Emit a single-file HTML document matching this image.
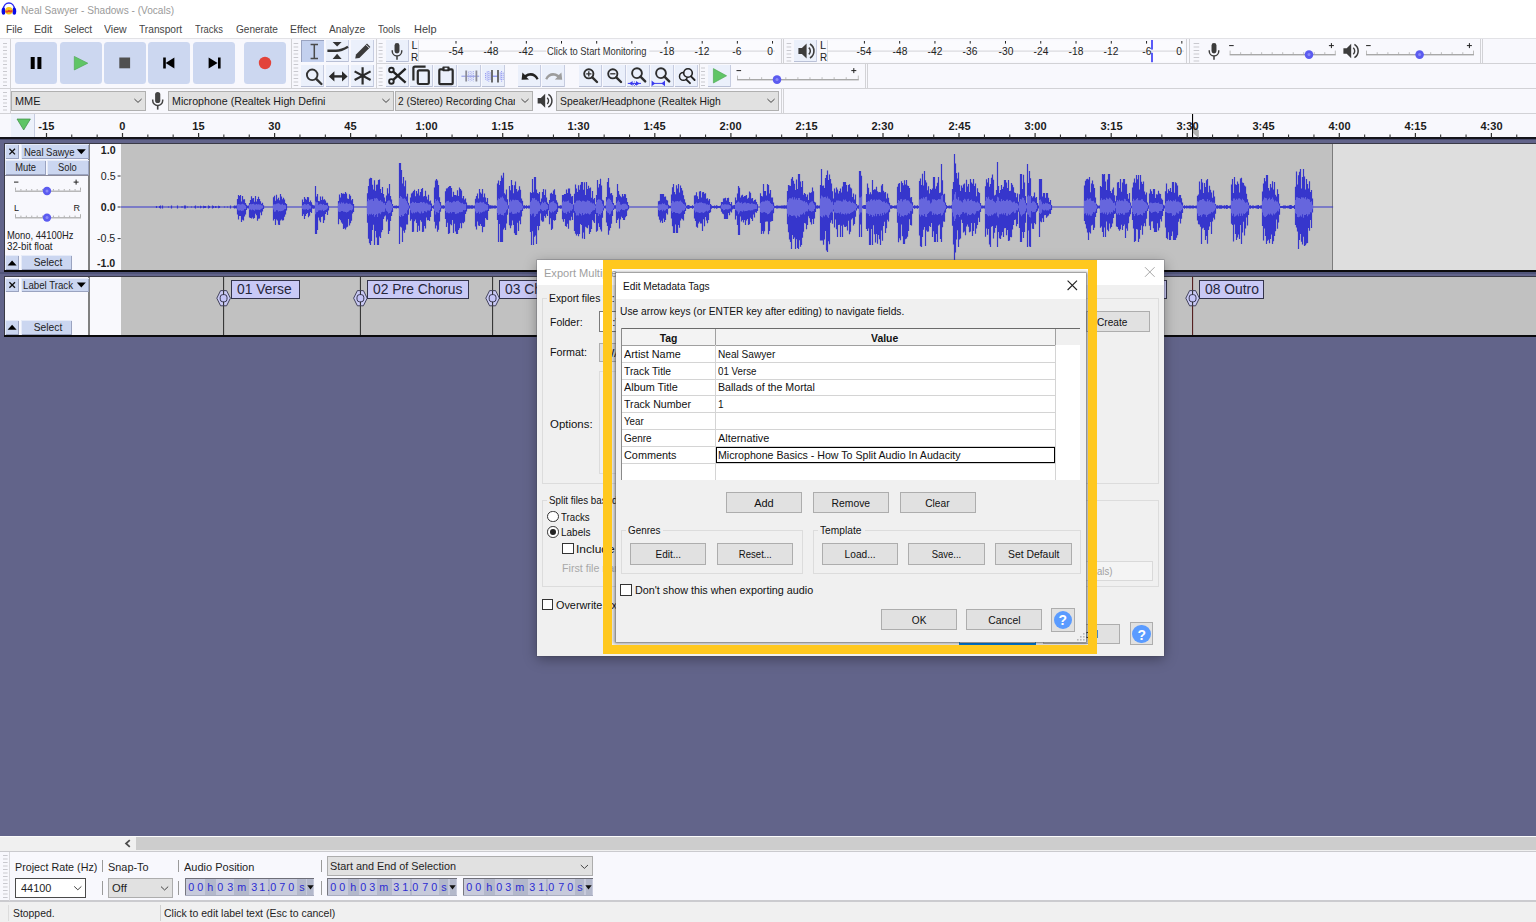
<!DOCTYPE html>
<html lang="en"><head><meta charset="utf-8"><title>Audacity - Edit Metadata Tags</title>
<style>
html,body{margin:0;padding:0;}
body{width:1536px;height:922px;overflow:hidden;background:#fff;position:relative;font-family:"Liberation Sans",sans-serif;}
.a{position:absolute;display:block;}
.t{white-space:nowrap;}
svg.a{overflow:hidden;}
</style></head><body>
<div class="a" style="left:0px;top:0px;width:1536px;height:38px;background:#ffffff;"></div>
<svg class="a" style="left:0px;top:0px;" width="20" height="20" viewBox="0 0 20 20">
<path d="M3.4 9.6 C3.4 0.8 14.4 0.8 14.4 9.6" fill="none" stroke="#2a2af0" stroke-width="1.5"/>
<ellipse cx="3.5" cy="11.2" rx="1.9" ry="3.6" fill="#0a0ae6"/>
<ellipse cx="14.3" cy="11.2" rx="1.9" ry="3.6" fill="#0a0ae6"/>
<ellipse cx="8.9" cy="10.8" rx="3.7" ry="3.8" fill="#f8c616"/>
<path d="M5.3 10.4 L7.4 10.8 L8.6 9.8 L10.4 10.6 L12.5 10 L12.5 12 L10.4 12.6 L8.6 12 L7.2 12.8 L5.3 12.2 Z" fill="#e8412c"/>
</svg>
<div class="a t" style="left:20.60px;top:2.30px;font-size:11.4px;line-height:16px;color:#9a9a9a;transform:scaleX(0.8860);transform-origin:0 50%;">Neal Sawyer - Shadows - (Vocals)</div>
<div class="a t" style="left:6.20px;top:21.00px;font-size:11.4px;line-height:16px;color:#444;transform:scaleX(0.9037);transform-origin:0 50%;">File</div>
<div class="a t" style="left:34.40px;top:21.00px;font-size:11.4px;line-height:16px;color:#444;transform:scaleX(0.9265);transform-origin:0 50%;">Edit</div>
<div class="a t" style="left:64.20px;top:21.00px;font-size:11.4px;line-height:16px;color:#444;transform:scaleX(0.8900);transform-origin:0 50%;">Select</div>
<div class="a t" style="left:104.40px;top:21.00px;font-size:11.4px;line-height:16px;color:#444;transform:scaleX(0.9227);transform-origin:0 50%;">View</div>
<div class="a t" style="left:139.40px;top:21.00px;font-size:11.4px;line-height:16px;color:#444;transform:scaleX(0.8937);transform-origin:0 50%;">Transport</div>
<div class="a t" style="left:195.20px;top:21.00px;font-size:11.4px;line-height:16px;color:#444;transform:scaleX(0.8246);transform-origin:0 50%;">Tracks</div>
<div class="a t" style="left:235.60px;top:21.00px;font-size:11.4px;line-height:16px;color:#444;transform:scaleX(0.8836);transform-origin:0 50%;">Generate</div>
<div class="a t" style="left:290.00px;top:21.00px;font-size:11.4px;line-height:16px;color:#444;transform:scaleX(0.9127);transform-origin:0 50%;">Effect</div>
<div class="a t" style="left:329.00px;top:21.00px;font-size:11.4px;line-height:16px;color:#444;transform:scaleX(0.8926);transform-origin:0 50%;">Analyze</div>
<div class="a t" style="left:378.40px;top:21.00px;font-size:11.4px;line-height:16px;color:#444;transform:scaleX(0.8394);transform-origin:0 50%;">Tools</div>
<div class="a t" style="left:413.80px;top:21.00px;font-size:11.4px;line-height:16px;color:#444;transform:scaleX(0.9639);transform-origin:0 50%;">Help</div>
<div class="a" style="left:0px;top:37.5px;width:1536px;height:76px;background:#f8f8fd;"></div>
<div class="a" style="left:0px;top:37.5px;width:1536px;height:1px;background:#e2e2e6;"></div>
<div class="a" style="left:0px;top:63px;width:1536px;height:1px;background:#d2d2d6;"></div>
<div class="a" style="left:0px;top:87.6px;width:1536px;height:1px;background:#d2d2d6;"></div>
<div class="a" style="left:0px;top:112.6px;width:1536px;height:1px;background:#d2d2d6;"></div>
<div class="a" style="left:0px;top:38.5px;width:376px;height:49px;background:#f8f8fd;"></div>
<div class="a" style="left:291px;top:38.5px;width:1px;height:49px;background:#d2d2d6;"></div>
<div class="a" style="left:15px;top:42px;width:42px;height:42px;background:#ccd7f0;border-radius:3.5px;"></div>
<div class="a" style="left:59.5px;top:42px;width:42px;height:42px;background:#ccd7f0;border-radius:3.5px;"></div>
<div class="a" style="left:104px;top:42px;width:42px;height:42px;background:#ccd7f0;border-radius:3.5px;"></div>
<div class="a" style="left:148px;top:42px;width:42px;height:42px;background:#ccd7f0;border-radius:3.5px;"></div>
<div class="a" style="left:192.5px;top:42px;width:42px;height:42px;background:#ccd7f0;border-radius:3.5px;"></div>
<div class="a" style="left:244px;top:42px;width:42px;height:42px;background:#ccd7f0;border-radius:3.5px;"></div>
<div class="a" style="left:301px;top:39.6px;width:23.4px;height:22.6px;background:#c3d0ee;"></div>
<div class="a" style="left:301px;top:39.6px;width:23.4px;height:1px;background:#9aa3c0;"></div>
<div class="a" style="left:301px;top:39.6px;width:1px;height:22.6px;background:#9aa3c0;"></div>
<div class="a" style="left:326px;top:39.8px;width:23.2px;height:22.2px;background:#ebf0fb;"></div>
<div class="a" style="left:326px;top:61px;width:23.2px;height:1px;background:#b9c0d6;"></div>
<div class="a" style="left:348.2px;top:39.8px;width:1px;height:22.2px;background:#c6cce0;"></div>
<div class="a" style="left:351px;top:39.8px;width:23.2px;height:22.2px;background:#ebf0fb;"></div>
<div class="a" style="left:351px;top:61px;width:23.2px;height:1px;background:#b9c0d6;"></div>
<div class="a" style="left:373.2px;top:39.8px;width:1px;height:22.2px;background:#c6cce0;"></div>
<div class="a" style="left:301px;top:64.6px;width:23.2px;height:22.2px;background:#ebf0fb;"></div>
<div class="a" style="left:301px;top:85.8px;width:23.2px;height:1px;background:#b9c0d6;"></div>
<div class="a" style="left:323.2px;top:64.6px;width:1px;height:22.2px;background:#c6cce0;"></div>
<div class="a" style="left:326px;top:64.6px;width:23.2px;height:22.2px;background:#ebf0fb;"></div>
<div class="a" style="left:326px;top:85.8px;width:23.2px;height:1px;background:#b9c0d6;"></div>
<div class="a" style="left:348.2px;top:64.6px;width:1px;height:22.2px;background:#c6cce0;"></div>
<div class="a" style="left:351px;top:64.6px;width:23.2px;height:22.2px;background:#ebf0fb;"></div>
<div class="a" style="left:351px;top:85.8px;width:23.2px;height:1px;background:#b9c0d6;"></div>
<div class="a" style="left:373.2px;top:64.6px;width:1px;height:22.2px;background:#c6cce0;"></div>
<div class="a" style="left:385.6px;top:39.8px;width:23.2px;height:22.2px;background:#ebf0fb;"></div>
<div class="a" style="left:385.6px;top:61px;width:23.2px;height:1px;background:#b9c0d6;"></div>
<div class="a" style="left:407.8px;top:39.8px;width:1px;height:22.2px;background:#c6cce0;"></div>
<div class="a" style="left:385.6px;top:64.6px;width:23.2px;height:22.2px;background:#ebf0fb;"></div>
<div class="a" style="left:385.6px;top:85.8px;width:23.2px;height:1px;background:#b9c0d6;"></div>
<div class="a" style="left:407.8px;top:64.6px;width:1px;height:22.2px;background:#c6cce0;"></div>
<div class="a" style="left:409.6px;top:64.6px;width:23.2px;height:22.2px;background:#ebf0fb;"></div>
<div class="a" style="left:409.6px;top:85.8px;width:23.2px;height:1px;background:#b9c0d6;"></div>
<div class="a" style="left:431.8px;top:64.6px;width:1px;height:22.2px;background:#c6cce0;"></div>
<div class="a" style="left:433.6px;top:64.6px;width:23.2px;height:22.2px;background:#ebf0fb;"></div>
<div class="a" style="left:433.6px;top:85.8px;width:23.2px;height:1px;background:#b9c0d6;"></div>
<div class="a" style="left:455.8px;top:64.6px;width:1px;height:22.2px;background:#c6cce0;"></div>
<div class="a" style="left:457.6px;top:64.6px;width:23.2px;height:22.2px;background:#ebf0fb;"></div>
<div class="a" style="left:457.6px;top:85.8px;width:23.2px;height:1px;background:#b9c0d6;"></div>
<div class="a" style="left:479.8px;top:64.6px;width:1px;height:22.2px;background:#c6cce0;"></div>
<div class="a" style="left:481.6px;top:64.6px;width:23.2px;height:22.2px;background:#ebf0fb;"></div>
<div class="a" style="left:481.6px;top:85.8px;width:23.2px;height:1px;background:#b9c0d6;"></div>
<div class="a" style="left:503.8px;top:64.6px;width:1px;height:22.2px;background:#c6cce0;"></div>
<div class="a" style="left:517.8px;top:64.6px;width:23.2px;height:22.2px;background:#ebf0fb;"></div>
<div class="a" style="left:517.8px;top:85.8px;width:23.2px;height:1px;background:#b9c0d6;"></div>
<div class="a" style="left:540px;top:64.6px;width:1px;height:22.2px;background:#c6cce0;"></div>
<div class="a" style="left:541.8px;top:64.6px;width:23.2px;height:22.2px;background:#ebf0fb;"></div>
<div class="a" style="left:541.8px;top:85.8px;width:23.2px;height:1px;background:#b9c0d6;"></div>
<div class="a" style="left:564px;top:64.6px;width:1px;height:22.2px;background:#c6cce0;"></div>
<div class="a" style="left:578.6px;top:64.6px;width:23.2px;height:22.2px;background:#ebf0fb;"></div>
<div class="a" style="left:578.6px;top:85.8px;width:23.2px;height:1px;background:#b9c0d6;"></div>
<div class="a" style="left:600.8px;top:64.6px;width:1px;height:22.2px;background:#c6cce0;"></div>
<div class="a" style="left:602.6px;top:64.6px;width:23.2px;height:22.2px;background:#ebf0fb;"></div>
<div class="a" style="left:602.6px;top:85.8px;width:23.2px;height:1px;background:#b9c0d6;"></div>
<div class="a" style="left:624.8px;top:64.6px;width:1px;height:22.2px;background:#c6cce0;"></div>
<div class="a" style="left:626.6px;top:64.6px;width:23.2px;height:22.2px;background:#ebf0fb;"></div>
<div class="a" style="left:626.6px;top:85.8px;width:23.2px;height:1px;background:#b9c0d6;"></div>
<div class="a" style="left:648.8px;top:64.6px;width:1px;height:22.2px;background:#c6cce0;"></div>
<div class="a" style="left:650.6px;top:64.6px;width:23.2px;height:22.2px;background:#ebf0fb;"></div>
<div class="a" style="left:650.6px;top:85.8px;width:23.2px;height:1px;background:#b9c0d6;"></div>
<div class="a" style="left:672.8px;top:64.6px;width:1px;height:22.2px;background:#c6cce0;"></div>
<div class="a" style="left:674.6px;top:64.6px;width:23.2px;height:22.2px;background:#ebf0fb;"></div>
<div class="a" style="left:674.6px;top:85.8px;width:23.2px;height:1px;background:#b9c0d6;"></div>
<div class="a" style="left:696.8px;top:64.6px;width:1px;height:22.2px;background:#c6cce0;"></div>
<div class="a" style="left:708px;top:64.6px;width:23.2px;height:22.2px;background:#ebf0fb;"></div>
<div class="a" style="left:708px;top:85.8px;width:23.2px;height:1px;background:#b9c0d6;"></div>
<div class="a" style="left:730.2px;top:64.6px;width:1px;height:22.2px;background:#c6cce0;"></div>
<div class="a" style="left:793.8px;top:39.8px;width:23.2px;height:22.2px;background:#ebf0fb;"></div>
<div class="a" style="left:793.8px;top:61px;width:23.2px;height:1px;background:#b9c0d6;"></div>
<div class="a" style="left:816px;top:39.8px;width:1px;height:22.2px;background:#c6cce0;"></div>
<div class="a" style="left:376px;top:38.5px;width:1px;height:49px;background:#d2d2d6;"></div>
<div class="a" style="left:780.5px;top:38.5px;width:1px;height:25px;background:#d2d2d6;"></div>
<div class="a" style="left:783px;top:38.5px;width:1px;height:25px;background:#d2d2d6;"></div>
<div class="a" style="left:1186px;top:38.5px;width:1px;height:25px;background:#d2d2d6;"></div>
<div class="a" style="left:1188.6px;top:38.5px;width:1px;height:25px;background:#d2d2d6;"></div>
<div class="a" style="left:1479.6px;top:38.5px;width:1px;height:25px;background:#d2d2d6;"></div>
<div class="a" style="left:1482px;top:38.5px;width:1px;height:25px;background:#d2d2d6;"></div>
<div class="a" style="left:699px;top:64px;width:1px;height:24px;background:#d2d2d6;"></div>
<div class="a" style="left:865px;top:64px;width:1px;height:24px;background:#d2d2d6;"></div>
<div class="a" style="left:867.4px;top:64px;width:1px;height:24px;background:#d2d2d6;"></div>
<div class="a" style="left:780.5px;top:88.6px;width:1px;height:24px;background:#d2d2d6;"></div>
<div class="a" style="left:783px;top:88.6px;width:1px;height:24px;background:#d2d2d6;"></div>
<div class="a" style="left:9.5px;top:38.5px;width:1px;height:75px;background:#d2d2d6;"></div>
<svg class="a" style="left:0px;top:38px;" width="1536" height="76" viewBox="0 38 1536 76"><rect x="3" y="43" width="4" height="1" fill="#c9c9cf"/><rect x="3" y="46.5" width="4" height="1" fill="#c9c9cf"/><rect x="3" y="50" width="4" height="1" fill="#c9c9cf"/><rect x="3" y="53.5" width="4" height="1" fill="#c9c9cf"/><rect x="3" y="57" width="4" height="1" fill="#c9c9cf"/><rect x="3" y="60.5" width="4" height="1" fill="#c9c9cf"/><rect x="3" y="64" width="4" height="1" fill="#c9c9cf"/><rect x="3" y="67.5" width="4" height="1" fill="#c9c9cf"/><rect x="3" y="71" width="4" height="1" fill="#c9c9cf"/><rect x="3" y="74.5" width="4" height="1" fill="#c9c9cf"/><rect x="3" y="78" width="4" height="1" fill="#c9c9cf"/><rect x="3" y="81.5" width="4" height="1" fill="#c9c9cf"/><rect x="3" y="85" width="4" height="1" fill="#c9c9cf"/><rect x="293.6" y="43" width="4.6" height="1" fill="#c9c9cf"/><rect x="293.6" y="46.5" width="4.6" height="1" fill="#c9c9cf"/><rect x="293.6" y="50" width="4.6" height="1" fill="#c9c9cf"/><rect x="293.6" y="53.5" width="4.6" height="1" fill="#c9c9cf"/><rect x="293.6" y="57" width="4.6" height="1" fill="#c9c9cf"/><rect x="293.6" y="60.5" width="4.6" height="1" fill="#c9c9cf"/><rect x="293.6" y="64" width="4.6" height="1" fill="#c9c9cf"/><rect x="293.6" y="67.5" width="4.6" height="1" fill="#c9c9cf"/><rect x="293.6" y="71" width="4.6" height="1" fill="#c9c9cf"/><rect x="293.6" y="74.5" width="4.6" height="1" fill="#c9c9cf"/><rect x="293.6" y="78" width="4.6" height="1" fill="#c9c9cf"/><rect x="293.6" y="81.5" width="4.6" height="1" fill="#c9c9cf"/><rect x="293.6" y="85" width="4.6" height="1" fill="#c9c9cf"/><rect x="378.6" y="43" width="4" height="1" fill="#c9c9cf"/><rect x="378.6" y="46.5" width="4" height="1" fill="#c9c9cf"/><rect x="378.6" y="50" width="4" height="1" fill="#c9c9cf"/><rect x="378.6" y="53.5" width="4" height="1" fill="#c9c9cf"/><rect x="378.6" y="57" width="4" height="1" fill="#c9c9cf"/><rect x="378.6" y="60.5" width="4" height="1" fill="#c9c9cf"/><rect x="378.6" y="67.5" width="4" height="1" fill="#c9c9cf"/><rect x="378.6" y="71" width="4" height="1" fill="#c9c9cf"/><rect x="378.6" y="74.5" width="4" height="1" fill="#c9c9cf"/><rect x="378.6" y="78" width="4" height="1" fill="#c9c9cf"/><rect x="378.6" y="81.5" width="4" height="1" fill="#c9c9cf"/><rect x="378.6" y="85" width="4" height="1" fill="#c9c9cf"/><rect x="701" y="67.5" width="4" height="1" fill="#c9c9cf"/><rect x="701" y="71" width="4" height="1" fill="#c9c9cf"/><rect x="701" y="74.5" width="4" height="1" fill="#c9c9cf"/><rect x="701" y="78" width="4" height="1" fill="#c9c9cf"/><rect x="701" y="81.5" width="4" height="1" fill="#c9c9cf"/><rect x="701" y="85" width="4" height="1" fill="#c9c9cf"/><rect x="786.6" y="43" width="4.6" height="1" fill="#c9c9cf"/><rect x="786.6" y="46.5" width="4.6" height="1" fill="#c9c9cf"/><rect x="786.6" y="50" width="4.6" height="1" fill="#c9c9cf"/><rect x="786.6" y="53.5" width="4.6" height="1" fill="#c9c9cf"/><rect x="786.6" y="57" width="4.6" height="1" fill="#c9c9cf"/><rect x="786.6" y="60.5" width="4.6" height="1" fill="#c9c9cf"/><rect x="1193.6" y="43" width="5.6" height="1" fill="#c9c9cf"/><rect x="1193.6" y="46.5" width="5.6" height="1" fill="#c9c9cf"/><rect x="1193.6" y="50" width="5.6" height="1" fill="#c9c9cf"/><rect x="1193.6" y="53.5" width="5.6" height="1" fill="#c9c9cf"/><rect x="1193.6" y="57" width="5.6" height="1" fill="#c9c9cf"/><rect x="1193.6" y="60.5" width="5.6" height="1" fill="#c9c9cf"/><rect x="3" y="92" width="4" height="1" fill="#c9c9cf"/><rect x="3" y="95.5" width="4" height="1" fill="#c9c9cf"/><rect x="3" y="99" width="4" height="1" fill="#c9c9cf"/><rect x="3" y="102.5" width="4" height="1" fill="#c9c9cf"/><rect x="3" y="106" width="4" height="1" fill="#c9c9cf"/><rect x="3" y="109.5" width="4" height="1" fill="#c9c9cf"/><rect x="30.7" y="57" width="4" height="12" fill="#000"/><rect x="37.4" y="57" width="4" height="12" fill="#000"/><path d="M74.3 56.4 L87.8 63.2 L74.3 70 Z" fill="#5fc566" stroke="#48a24e" stroke-width="0.6"/><rect x="119.3" y="57.5" width="10.8" height="10.8" fill="#505050"/><rect x="163.2" y="57.5" width="2.6" height="11" fill="#000"/><path d="M174.4 57.5 V68.5 L165.6 63 Z" fill="#000"/><rect x="218" y="57.5" width="2.6" height="11" fill="#000"/><path d="M208.6 57.5 V68.5 L217.6 63 Z" fill="#000"/><circle cx="265" cy="63" r="6.2" fill="#e2433a"/><path d="M310.6 44.4 H318 M314.3 44.4 V58.4 M310.6 58.4 H318" stroke="#4a4a4a" stroke-width="1.5" fill="none"/><path d="M332.6 42 H341.6 L337.1 46.6 Z" fill="#333"/><path d="M332.6 59 H341.6 L337.1 53.8 Z" fill="#333"/><path d="M327.4 50.8 H336 C340 50.8 343.4 49.6 348 46.8" stroke="#333" stroke-width="2.4" fill="none"/><path d="M355.2 58.6 L356 54.6 L367 43.6 L370.4 47 L359.4 58 Z" fill="#3a3a3a"/><path d="M366 44.8 L369.4 48.2" stroke="#ebf0fb" stroke-width="0.9"/><g transform="translate(313.8 76.6)"><circle cx="-1.6" cy="-1.8" r="5.3" fill="none" stroke="#333" stroke-width="1.9"/><path d="M2.4 2.2 L7.6 7.4" stroke="#333" stroke-width="2.4" stroke-linecap="round"/></g><path d="M332 76.4 H345" stroke="#2a2a2a" stroke-width="2.4"/><path d="M328.8 76.4 L334.4 71.3 V81.5 Z M347.6 76.4 L342 71.3 V81.5 Z" fill="#2a2a2a"/><path d="M362.6 67.2 V84.4 M354.6 71.4 L370.6 80 M354.6 80 L370.6 71.4" stroke="#2a2a2a" stroke-width="2.2" fill="none"/><g transform="translate(397 51.6) scale(0.95)" fill="none" stroke="#3c3c3c"><rect x="-2.6" y="-9" width="5.2" height="11" rx="2.6" fill="#3c3c3c" stroke="none"/><path d="M-5 -1.5 V-0.5 A5 5 0 0 0 5 -0.5 V-1.5" stroke-width="1.5"/><path d="M0 4.6 V8.6" stroke-width="1.6"/></g><g stroke="#222" fill="none"><circle cx="391.4" cy="70" r="2.3" stroke-width="1.9"/><circle cx="391.4" cy="81.4" r="2.3" stroke-width="1.9"/><path d="M393.2 71.6 L405.6 82.6 M393.2 79.8 L405.6 68.6" stroke-width="2.4"/></g><g stroke="#2a2a2a" fill="none" stroke-width="2.2"><rect x="417.8" y="70.4" width="11" height="13.6" rx="1.4"/><path d="M413.4 80.4 V68 Q413.4 66.6 415 66.6 H425.6"/></g><rect x="439.3" y="69.4" width="13.4" height="14.8" rx="1" stroke="#2a2a2a" fill="none" stroke-width="2.2"/><rect x="442.4" y="66.6" width="7.2" height="4.6" rx="0.8" fill="#2a2a2a"/><rect x="444.6" y="67.8" width="2.8" height="1.6" fill="#ebf0fb"/><path d="M461.4 76.2 H479.2" stroke="#8088e0" stroke-width="0.9" fill="none"/><path d="M468.6 71.6 V80.8 M470.2 71 V81.4 M471.8 71.6 V80.8 M473.4 71 V81.4" stroke="#9aa0e8" stroke-width="0.8" stroke-dasharray="1.2 0.8" fill="none"/><path d="M466.2 70.6 V81.4 M476.4 70.6 V81.4" stroke="#8c8c98" stroke-width="1.8"/><g stroke="#8a90f0" stroke-width="0.9" fill="none" stroke-dasharray="1.3 0.7"><path d="M485.6 73 V79.6 M487.2 71.4 V81.4 M488.8 71 V81.6 M490.2 72.4 V80.2 M500.2 72.4 V80.2 M501.6 71 V81.6 M503.2 72.6 V80"/></g><path d="M492.6 76.2 H497.6" stroke="#6a74ee" stroke-width="1"/><path d="M492 70 V82.4 M498 70 V82.4" stroke="#555" stroke-width="1.7"/><path d="M522.4 72.4 L521.6 79.8 L529 79.4 L526.6 77.2 C530 74.6 534.6 75.4 536.6 79.8 L538.6 78.8 C536 72.4 529.6 71.4 525 75 Z" fill="#222"/><path d="M561.4 72.4 L562.2 79.8 L554.8 79.4 L557.2 77.2 C553.8 74.6 549.2 75.4 547.2 79.8 L545.2 78.8 C547.8 72.4 554.2 71.4 558.8 75 Z" fill="#9c9c9c"/><g transform="translate(590.4 75.6)"><circle cx="-1.6" cy="-1.8" r="4.6" fill="none" stroke="#2e2e2e" stroke-width="1.9"/><path d="M1.9 1.7 L6.6 6.4" stroke="#2e2e2e" stroke-width="2.4" stroke-linecap="round"/><path d="M-4.2 -1.8 H1 M-1.6 -4.4 V0.8" stroke="#2e2e2e" stroke-width="1.3"/></g><g transform="translate(614.4 75.6)"><circle cx="-1.6" cy="-1.8" r="4.6" fill="none" stroke="#2e2e2e" stroke-width="1.9"/><path d="M1.9 1.7 L6.6 6.4" stroke="#2e2e2e" stroke-width="2.4" stroke-linecap="round"/><path d="M-4.2 -1.8 H1" stroke="#2e2e2e" stroke-width="1.3"/></g><g transform="translate(638.6 75)"><circle cx="-1.6" cy="-1.8" r="4.9" fill="none" stroke="#2e2e2e" stroke-width="1.9"/><path d="M1.9 1.7 L6.6 6.4" stroke="#2e2e2e" stroke-width="2.4" stroke-linecap="round"/></g><path d="M627.8 83.4 H641" stroke="#3a3aee" stroke-width="1"/><path d="M629 83.4 L632.6 81 V85.8 Z M639.6 83.4 L636 81 V85.8 Z M632 83.4 L635 81.4 V85.4Z M637 83.4 L634 81.4 V85.4Z" fill="#3a3aee"/><g transform="translate(662.6 75)"><circle cx="-1.6" cy="-1.8" r="4.9" fill="none" stroke="#2e2e2e" stroke-width="1.9"/><path d="M1.9 1.7 L6.6 6.4" stroke="#2e2e2e" stroke-width="2.4" stroke-linecap="round"/></g><path d="M652 83.4 H664" stroke="#3a3aee" stroke-width="1"/><path d="M651.6 80.6 V86.2 L655.2 83.4 Z M665 80.6 V86.2 L661.4 83.4 Z" fill="#3a3aee"/><g fill="none" stroke="#222"><circle cx="683.4" cy="76.4" r="3.9" stroke-width="1.5"/><circle cx="688" cy="73" r="4.3" stroke-width="1.6" fill="#ebf0fb"/><path d="M686.4 79.6 L690 83.2 M691 76.4 L694.6 80" stroke-width="1.9" stroke-linecap="round"/></g><path d="M713.4 68.6 L726.6 75.8 L713.4 83 Z" fill="#5fc566" stroke="#48a24e" stroke-width="0.6"/><rect x="736.5" y="70.1" width="4.6" height="1" fill="#222"/><rect x="851.3" y="70.1" width="5" height="1" fill="#222"/><rect x="853.3" y="68.1" width="1" height="5" fill="#222"/><rect x="737" y="79" width="121.8" height="1.4" fill="#a8a8a8"/><rect x="737" y="75.6" width="1" height="3.4" fill="#bdbdbd"/><rect x="749.08" y="77.2" width="1" height="1.8" fill="#bdbdbd"/><rect x="761.16" y="77.2" width="1" height="1.8" fill="#bdbdbd"/><rect x="773.24" y="77.2" width="1" height="1.8" fill="#bdbdbd"/><rect x="785.32" y="77.2" width="1" height="1.8" fill="#bdbdbd"/><rect x="797.4" y="77.2" width="1" height="1.8" fill="#bdbdbd"/><rect x="809.48" y="77.2" width="1" height="1.8" fill="#bdbdbd"/><rect x="821.56" y="77.2" width="1" height="1.8" fill="#bdbdbd"/><rect x="833.64" y="77.2" width="1" height="1.8" fill="#bdbdbd"/><rect x="845.72" y="77.2" width="1" height="1.8" fill="#bdbdbd"/><rect x="857.8" y="75.6" width="1" height="3.4" fill="#bdbdbd"/><circle cx="777" cy="79.6" r="4.3" fill="#5b5bf0"/><circle cx="777" cy="79.6" r="1.5" fill="#8b8bf6"/><g transform="translate(806.4 51) scale(1)" fill="none" stroke="#3c3c3c"><path d="M-8 -3 H-4.5 L0.2 -7.6 V7.6 L-4.5 3 H-8Z" fill="#3c3c3c" stroke="none"/><path d="M2.4 -3.4 A4.6 4.6 0 0 1 2.4 3.4" stroke-width="1.5"/><path d="M3.6 -7 A8.2 8.2 0 0 1 3.6 7" stroke-width="1.6"/></g><g transform="translate(1214 51.6) scale(0.95)" fill="none" stroke="#3c3c3c"><rect x="-2.6" y="-9" width="5.2" height="11" rx="2.6" fill="#3c3c3c" stroke="none"/><path d="M-5 -1.5 V-0.5 A5 5 0 0 0 5 -0.5 V-1.5" stroke-width="1.5"/><path d="M0 4.6 V8.6" stroke-width="1.6"/></g><rect x="1229.1" y="45.1" width="4.6" height="1" fill="#222"/><rect x="1328.9" y="45.1" width="5" height="1" fill="#222"/><rect x="1330.9" y="43.1" width="1" height="5" fill="#222"/><rect x="1229.6" y="54" width="106.2" height="1.4" fill="#a8a8a8"/><rect x="1229.6" y="50.6" width="1" height="3.4" fill="#bdbdbd"/><rect x="1240.12" y="52.2" width="1" height="1.8" fill="#bdbdbd"/><rect x="1250.64" y="52.2" width="1" height="1.8" fill="#bdbdbd"/><rect x="1261.16" y="52.2" width="1" height="1.8" fill="#bdbdbd"/><rect x="1271.68" y="52.2" width="1" height="1.8" fill="#bdbdbd"/><rect x="1282.2" y="52.2" width="1" height="1.8" fill="#bdbdbd"/><rect x="1292.72" y="52.2" width="1" height="1.8" fill="#bdbdbd"/><rect x="1303.24" y="52.2" width="1" height="1.8" fill="#bdbdbd"/><rect x="1313.76" y="52.2" width="1" height="1.8" fill="#bdbdbd"/><rect x="1324.28" y="52.2" width="1" height="1.8" fill="#bdbdbd"/><rect x="1334.8" y="50.6" width="1" height="3.4" fill="#bdbdbd"/><circle cx="1309" cy="54.6" r="4.3" fill="#5b5bf0"/><circle cx="1309" cy="54.6" r="1.5" fill="#8b8bf6"/><g transform="translate(1351 51) scale(0.95)" fill="none" stroke="#3c3c3c"><path d="M-8 -3 H-4.5 L0.2 -7.6 V7.6 L-4.5 3 H-8Z" fill="#3c3c3c" stroke="none"/><path d="M2.4 -3.4 A4.6 4.6 0 0 1 2.4 3.4" stroke-width="1.5"/><path d="M3.6 -7 A8.2 8.2 0 0 1 3.6 7" stroke-width="1.6"/></g><rect x="1366.1" y="45.1" width="4.6" height="1" fill="#222"/><rect x="1466.9" y="45.1" width="5" height="1" fill="#222"/><rect x="1468.9" y="43.1" width="1" height="5" fill="#222"/><rect x="1366" y="54" width="108" height="1.4" fill="#a8a8a8"/><rect x="1366" y="50.6" width="1" height="3.4" fill="#bdbdbd"/><rect x="1376.7" y="52.2" width="1" height="1.8" fill="#bdbdbd"/><rect x="1387.4" y="52.2" width="1" height="1.8" fill="#bdbdbd"/><rect x="1398.1" y="52.2" width="1" height="1.8" fill="#bdbdbd"/><rect x="1408.8" y="52.2" width="1" height="1.8" fill="#bdbdbd"/><rect x="1419.5" y="52.2" width="1" height="1.8" fill="#bdbdbd"/><rect x="1430.2" y="52.2" width="1" height="1.8" fill="#bdbdbd"/><rect x="1440.9" y="52.2" width="1" height="1.8" fill="#bdbdbd"/><rect x="1451.6" y="52.2" width="1" height="1.8" fill="#bdbdbd"/><rect x="1462.3" y="52.2" width="1" height="1.8" fill="#bdbdbd"/><rect x="1473" y="50.6" width="1" height="3.4" fill="#bdbdbd"/><circle cx="1419.6" cy="54.6" r="4.3" fill="#5b5bf0"/><circle cx="1419.6" cy="54.6" r="1.5" fill="#8b8bf6"/><g transform="translate(157.7 101) scale(1)" fill="none" stroke="#444"><rect x="-2.6" y="-9" width="5.2" height="11" rx="2.6" fill="#444" stroke="none"/><path d="M-5 -1.5 V-0.5 A5 5 0 0 0 5 -0.5 V-1.5" stroke-width="1.5"/><path d="M0 4.6 V8.6" stroke-width="1.6"/></g><g transform="translate(545 100.8) scale(0.92)" fill="none" stroke="#3c3c3c"><path d="M-8 -3 H-4.5 L0.2 -7.6 V7.6 L-4.5 3 H-8Z" fill="#3c3c3c" stroke="none"/><path d="M2.4 -3.4 A4.6 4.6 0 0 1 2.4 3.4" stroke-width="1.5"/><path d="M3.6 -7 A8.2 8.2 0 0 1 3.6 7" stroke-width="1.6"/></g><rect x="419" y="40.2" width="356" height="21.6" fill="#fbfbfe"/><rect x="419" y="50.6" width="356" height="1" fill="#d3d3d8"/><rect x="418" y="40.2" width="1" height="21.6" fill="#dcdce0"/><rect x="455.5" y="41" width="1" height="2.6" fill="#222"/><rect x="490.67" y="41" width="1" height="2.6" fill="#222"/><rect x="525.84" y="41" width="1" height="2.6" fill="#222"/><rect x="561.01" y="41" width="1" height="2.6" fill="#222"/><rect x="596.18" y="41" width="1" height="2.6" fill="#222"/><rect x="631.35" y="41" width="1" height="2.6" fill="#222"/><rect x="666.52" y="41" width="1" height="2.6" fill="#222"/><rect x="701.69" y="41" width="1" height="2.6" fill="#222"/><rect x="736.86" y="41" width="1" height="2.6" fill="#222"/><rect x="772.03" y="41" width="1" height="2.6" fill="#222"/><rect x="546.4" y="45.6" width="103" height="12.6" fill="#fcfcff"/><rect x="828" y="40.2" width="356" height="21.6" fill="#fbfbfe"/><rect x="828" y="50.6" width="356" height="1" fill="#d3d3d8"/><rect x="827" y="40.2" width="1" height="21.6" fill="#dcdce0"/><rect x="863.9" y="41" width="1" height="2.6" fill="#222"/><rect x="899.17" y="41" width="1" height="2.6" fill="#222"/><rect x="934.44" y="41" width="1" height="2.6" fill="#222"/><rect x="969.71" y="41" width="1" height="2.6" fill="#222"/><rect x="1004.98" y="41" width="1" height="2.6" fill="#222"/><rect x="1040.25" y="41" width="1" height="2.6" fill="#222"/><rect x="1075.52" y="41" width="1" height="2.6" fill="#222"/><rect x="1110.79" y="41" width="1" height="2.6" fill="#222"/><rect x="1146.06" y="41" width="1" height="2.6" fill="#222"/><rect x="1181.33" y="41" width="1" height="2.6" fill="#222"/><rect x="1151" y="40" width="2" height="9.6" fill="#5a5af8"/><rect x="1151" y="52.8" width="2" height="9.4" fill="#5a5af8"/></svg>
<div class="a t" style="left:448.05px;top:43.70px;font-size:11px;line-height:15px;color:#222;transform:scaleX(0.9300);transform-origin:50% 50%;">-54</div>
<div class="a t" style="left:483.22px;top:43.70px;font-size:11px;line-height:15px;color:#222;transform:scaleX(0.9300);transform-origin:50% 50%;">-48</div>
<div class="a t" style="left:518.39px;top:43.70px;font-size:11px;line-height:15px;color:#222;transform:scaleX(0.9300);transform-origin:50% 50%;">-42</div>
<div class="a t" style="left:659.07px;top:43.70px;font-size:11px;line-height:15px;color:#222;transform:scaleX(0.9300);transform-origin:50% 50%;">-18</div>
<div class="a t" style="left:694.24px;top:43.70px;font-size:11px;line-height:15px;color:#222;transform:scaleX(0.9300);transform-origin:50% 50%;">-12</div>
<div class="a t" style="left:732.47px;top:43.70px;font-size:11px;line-height:15px;color:#222;transform:scaleX(0.9300);transform-origin:50% 50%;">-6</div>
<div class="a t" style="left:766.97px;top:43.70px;font-size:11px;line-height:15px;color:#222;transform:scaleX(0.9300);transform-origin:50% 50%;">0</div>
<div class="a t" style="left:546.80px;top:44.10px;font-size:11px;line-height:15px;color:#333;transform:scaleX(0.8513);transform-origin:0 50%;">Click to Start Monitoring</div>
<div class="a t" style="left:856.45px;top:43.70px;font-size:11px;line-height:15px;color:#222;transform:scaleX(0.9300);transform-origin:50% 50%;">-54</div>
<div class="a t" style="left:891.72px;top:43.70px;font-size:11px;line-height:15px;color:#222;transform:scaleX(0.9300);transform-origin:50% 50%;">-48</div>
<div class="a t" style="left:926.99px;top:43.70px;font-size:11px;line-height:15px;color:#222;transform:scaleX(0.9300);transform-origin:50% 50%;">-42</div>
<div class="a t" style="left:962.26px;top:43.70px;font-size:11px;line-height:15px;color:#222;transform:scaleX(0.9300);transform-origin:50% 50%;">-36</div>
<div class="a t" style="left:997.53px;top:43.70px;font-size:11px;line-height:15px;color:#222;transform:scaleX(0.9300);transform-origin:50% 50%;">-30</div>
<div class="a t" style="left:1032.80px;top:43.70px;font-size:11px;line-height:15px;color:#222;transform:scaleX(0.9300);transform-origin:50% 50%;">-24</div>
<div class="a t" style="left:1068.07px;top:43.70px;font-size:11px;line-height:15px;color:#222;transform:scaleX(0.9300);transform-origin:50% 50%;">-18</div>
<div class="a t" style="left:1103.34px;top:43.70px;font-size:11px;line-height:15px;color:#222;transform:scaleX(0.9300);transform-origin:50% 50%;">-12</div>
<div class="a t" style="left:1141.67px;top:43.70px;font-size:11px;line-height:15px;color:#222;transform:scaleX(0.9300);transform-origin:50% 50%;">-6</div>
<div class="a t" style="left:1175.77px;top:43.70px;font-size:11px;line-height:15px;color:#222;transform:scaleX(0.9300);transform-origin:50% 50%;">0</div>
<div class="a t" style="left:411.40px;top:37.50px;font-size:11px;line-height:15px;color:#222;">L</div>
<div class="a t" style="left:411.40px;top:49.90px;font-size:11px;line-height:15px;color:#222;transform:scaleX(0.9000);transform-origin:0 50%;">R</div>
<div class="a t" style="left:820.00px;top:37.50px;font-size:11px;line-height:15px;color:#222;">L</div>
<div class="a t" style="left:820.00px;top:49.90px;font-size:11px;line-height:15px;color:#222;transform:scaleX(0.9000);transform-origin:0 50%;">R</div>
<div class="a" style="left:11px;top:90.6px;width:134.8px;height:20px;background:#e1e1e1;border:1px solid #b0b0b0;box-sizing:border-box;"></div>
<div class="a t" style="left:14.60px;top:92.70px;font-size:11.4px;line-height:16px;color:#1a1a1a;transform:scaleX(0.9588);transform-origin:0 50%;">MME</div>
<svg class="a" style="left:131.8px;top:96px;" width="12" height="10" viewBox="131.8 96 12 10"><path d="M134.2 99 L137.8 102.4 L141.4 99" stroke="#444" stroke-width="1" fill="none"/></svg>
<div class="a" style="left:168.4px;top:90.6px;width:225.2px;height:20px;background:#e1e1e1;border:1px solid #b0b0b0;box-sizing:border-box;"></div>
<div class="a t" style="left:172.00px;top:92.70px;font-size:11.4px;line-height:16px;color:#1a1a1a;transform:scaleX(0.9360);transform-origin:0 50%;">Microphone (Realtek High Defini</div>
<svg class="a" style="left:379.6px;top:96px;" width="12" height="10" viewBox="379.6 96 12 10"><path d="M382 99 L385.6 102.4 L389.2 99" stroke="#444" stroke-width="1" fill="none"/></svg>
<div class="a" style="left:394.8px;top:90.6px;width:138.2px;height:20px;background:#e1e1e1;border:1px solid #b0b0b0;box-sizing:border-box;"></div>
<div class="a t" style="left:398.40px;top:92.70px;font-size:11.4px;line-height:16px;color:#1a1a1a;transform:scaleX(0.8867);transform-origin:0 50%;">2 (Stereo) Recording Chan</div>
<div class="a" style="left:515.1px;top:92px;width:16.9px;height:17px;background:#e1e1e1;"></div>
<svg class="a" style="left:519px;top:96px;" width="12" height="10" viewBox="519 96 12 10"><path d="M521.4 99 L525 102.4 L528.6 99" stroke="#444" stroke-width="1" fill="none"/></svg>
<div class="a" style="left:556px;top:90.6px;width:222.8px;height:20px;background:#e1e1e1;border:1px solid #b0b0b0;box-sizing:border-box;"></div>
<div class="a t" style="left:559.60px;top:92.70px;font-size:11.4px;line-height:16px;color:#1a1a1a;transform:scaleX(0.9106);transform-origin:0 50%;">Speaker/Headphone (Realtek High</div>
<svg class="a" style="left:764.8px;top:96px;" width="12" height="10" viewBox="764.8 96 12 10"><path d="M767.2 99 L770.8 102.4 L774.4 99" stroke="#444" stroke-width="1" fill="none"/></svg>
<div class="a" style="left:0px;top:113.6px;width:1536px;height:24.4px;background:#f8f8fd;"></div>
<div class="a" style="left:11px;top:114.4px;width:23.4px;height:22.6px;background:#edf1fb;"></div>
<div class="a" style="left:33.6px;top:114.4px;width:1px;height:23px;background:#c6cce0;"></div>
<div class="a" style="left:0px;top:137.4px;width:1536px;height:698.5px;background:#62648a;"></div>
<div class="a" style="left:0px;top:137.4px;width:1536px;height:1.6px;background:#15151c;"></div>
<div class="a" style="left:0px;top:139px;width:1536px;height:0.8px;background:#4a4c6e;"></div>
<div class="a" style="left:3.6px;top:142.5px;width:1532.4px;height:127.7px;background:#3a3a46;"></div>
<div class="a" style="left:3.6px;top:270px;width:1532.4px;height:1.8px;background:#0a0a0c;"></div>
<div class="a" style="left:0px;top:271.8px;width:1536px;height:2px;background:#50547a;"></div>
<div class="a" style="left:4.6px;top:143.8px;width:84.6px;height:126.2px;background:#f8f8fd;"></div>
<div class="a" style="left:89.6px;top:143.8px;width:31px;height:126.2px;background:#f9f9fd;"></div>
<div class="a" style="left:88.4px;top:143.8px;width:1.4px;height:126.2px;background:#808080;"></div>
<div class="a" style="left:120.8px;top:143.8px;width:1211.6px;height:126.2px;background:#c1c1c1;"></div>
<div class="a" style="left:1332.4px;top:143.8px;width:203.6px;height:126.2px;background:#dedede;"></div>
<div class="a" style="left:1331.8px;top:143.8px;width:0.9px;height:126.2px;background:#7c7c7c;"></div>
<div class="a" style="left:5px;top:144.4px;width:14.4px;height:14.6px;background:#cbd6f0;"></div>
<div class="a" style="left:5px;top:158px;width:14.4px;height:1px;background:#9aa3c0;"></div>
<div class="a" style="left:18.4px;top:144.4px;width:1px;height:14.6px;background:#9aa3c0;"></div>
<div class="a" style="left:5px;top:144.4px;width:14.4px;height:1px;background:#e6ebf8;"></div>
<div class="a" style="left:5px;top:144.4px;width:1px;height:14.6px;background:#e6ebf8;"></div>
<div class="a" style="left:21px;top:144.4px;width:67.6px;height:14.6px;background:#cbd6f0;"></div>
<div class="a" style="left:21px;top:158px;width:67.6px;height:1px;background:#9aa3c0;"></div>
<div class="a" style="left:87.6px;top:144.4px;width:1px;height:14.6px;background:#9aa3c0;"></div>
<div class="a" style="left:21px;top:144.4px;width:67.6px;height:1px;background:#e6ebf8;"></div>
<div class="a" style="left:21px;top:144.4px;width:1px;height:14.6px;background:#e6ebf8;"></div>
<div class="a" style="left:5px;top:160.4px;width:41.4px;height:14.4px;background:#cbd6f0;"></div>
<div class="a" style="left:5px;top:173.8px;width:41.4px;height:1px;background:#9aa3c0;"></div>
<div class="a" style="left:45.4px;top:160.4px;width:1px;height:14.4px;background:#9aa3c0;"></div>
<div class="a" style="left:5px;top:160.4px;width:41.4px;height:1px;background:#e6ebf8;"></div>
<div class="a" style="left:5px;top:160.4px;width:1px;height:14.4px;background:#e6ebf8;"></div>
<div class="a" style="left:47.2px;top:160.4px;width:41.4px;height:14.4px;background:#cbd6f0;"></div>
<div class="a" style="left:47.2px;top:173.8px;width:41.4px;height:1px;background:#9aa3c0;"></div>
<div class="a" style="left:87.6px;top:160.4px;width:1px;height:14.4px;background:#9aa3c0;"></div>
<div class="a" style="left:47.2px;top:160.4px;width:41.4px;height:1px;background:#e6ebf8;"></div>
<div class="a" style="left:47.2px;top:160.4px;width:1px;height:14.4px;background:#e6ebf8;"></div>
<div class="a" style="left:5px;top:255.4px;width:14.4px;height:14.6px;background:#cbd6f0;"></div>
<div class="a" style="left:5px;top:269px;width:14.4px;height:1px;background:#9aa3c0;"></div>
<div class="a" style="left:18.4px;top:255.4px;width:1px;height:14.6px;background:#9aa3c0;"></div>
<div class="a" style="left:5px;top:255.4px;width:14.4px;height:1px;background:#e6ebf8;"></div>
<div class="a" style="left:5px;top:255.4px;width:1px;height:14.6px;background:#e6ebf8;"></div>
<div class="a" style="left:21px;top:255.4px;width:51.4px;height:14.6px;background:#cbd6f0;"></div>
<div class="a" style="left:21px;top:269px;width:51.4px;height:1px;background:#9aa3c0;"></div>
<div class="a" style="left:71.4px;top:255.4px;width:1px;height:14.6px;background:#9aa3c0;"></div>
<div class="a" style="left:21px;top:255.4px;width:51.4px;height:1px;background:#e6ebf8;"></div>
<div class="a" style="left:21px;top:255.4px;width:1px;height:14.6px;background:#e6ebf8;"></div>
<div class="a" style="left:4.6px;top:175px;width:84.6px;height:0.8px;background:#8a8a9a;"></div>
<div class="a" style="left:3.6px;top:276px;width:1532.4px;height:59px;background:#3a3a46;"></div>
<div class="a" style="left:3.6px;top:335px;width:1532.4px;height:1.5px;background:#0a0a0c;"></div>
<div class="a" style="left:4.6px;top:277px;width:84.6px;height:58px;background:#f8f8fd;"></div>
<div class="a" style="left:89.6px;top:277px;width:31px;height:58px;background:#f9f9fd;"></div>
<div class="a" style="left:88.4px;top:277px;width:1.4px;height:58px;background:#808080;"></div>
<div class="a" style="left:120.8px;top:277px;width:1415.2px;height:58px;background:#c1c1c1;"></div>
<div class="a" style="left:5px;top:277.8px;width:14.4px;height:14.6px;background:#cbd6f0;"></div>
<div class="a" style="left:5px;top:291.4px;width:14.4px;height:1px;background:#9aa3c0;"></div>
<div class="a" style="left:18.4px;top:277.8px;width:1px;height:14.6px;background:#9aa3c0;"></div>
<div class="a" style="left:5px;top:277.8px;width:14.4px;height:1px;background:#e6ebf8;"></div>
<div class="a" style="left:5px;top:277.8px;width:1px;height:14.6px;background:#e6ebf8;"></div>
<div class="a" style="left:21px;top:277.8px;width:67.6px;height:14.6px;background:#cbd6f0;"></div>
<div class="a" style="left:21px;top:291.4px;width:67.6px;height:1px;background:#9aa3c0;"></div>
<div class="a" style="left:87.6px;top:277.8px;width:1px;height:14.6px;background:#9aa3c0;"></div>
<div class="a" style="left:21px;top:277.8px;width:67.6px;height:1px;background:#e6ebf8;"></div>
<div class="a" style="left:21px;top:277.8px;width:1px;height:14.6px;background:#e6ebf8;"></div>
<div class="a" style="left:5px;top:319.8px;width:14.4px;height:14.8px;background:#cbd6f0;"></div>
<div class="a" style="left:5px;top:333.6px;width:14.4px;height:1px;background:#9aa3c0;"></div>
<div class="a" style="left:18.4px;top:319.8px;width:1px;height:14.8px;background:#9aa3c0;"></div>
<div class="a" style="left:5px;top:319.8px;width:14.4px;height:1px;background:#e6ebf8;"></div>
<div class="a" style="left:5px;top:319.8px;width:1px;height:14.8px;background:#e6ebf8;"></div>
<div class="a" style="left:21px;top:319.8px;width:51.4px;height:14.8px;background:#cbd6f0;"></div>
<div class="a" style="left:21px;top:333.6px;width:51.4px;height:1px;background:#9aa3c0;"></div>
<div class="a" style="left:71.4px;top:319.8px;width:1px;height:14.8px;background:#9aa3c0;"></div>
<div class="a" style="left:21px;top:319.8px;width:51.4px;height:1px;background:#e6ebf8;"></div>
<div class="a" style="left:21px;top:319.8px;width:1px;height:14.8px;background:#e6ebf8;"></div>
<svg class="a" style="left:0px;top:113px;" width="1536" height="225" viewBox="0 113 1536 225"><rect x="45.9" y="133" width="1.2" height="4.6" fill="#333"/><rect x="71.2" y="134.5" width="1.1" height="3" fill="#3a3a3a"/><rect x="96.6" y="134.5" width="1.1" height="3" fill="#3a3a3a"/><rect x="121.9" y="133" width="1.2" height="4.6" fill="#333"/><rect x="147.3" y="134.5" width="1.1" height="3" fill="#3a3a3a"/><rect x="172.6" y="134.5" width="1.1" height="3" fill="#3a3a3a"/><rect x="198.0" y="133" width="1.2" height="4.6" fill="#333"/><rect x="223.3" y="134.5" width="1.1" height="3" fill="#3a3a3a"/><rect x="248.7" y="134.5" width="1.1" height="3" fill="#3a3a3a"/><rect x="274.0" y="133" width="1.2" height="4.6" fill="#333"/><rect x="299.4" y="134.5" width="1.1" height="3" fill="#3a3a3a"/><rect x="324.8" y="134.5" width="1.1" height="3" fill="#3a3a3a"/><rect x="350.0" y="133" width="1.2" height="4.6" fill="#333"/><rect x="375.4" y="134.5" width="1.1" height="3" fill="#3a3a3a"/><rect x="400.8" y="134.5" width="1.1" height="3" fill="#3a3a3a"/><rect x="426.1" y="133" width="1.2" height="4.6" fill="#333"/><rect x="451.5" y="134.5" width="1.1" height="3" fill="#3a3a3a"/><rect x="476.8" y="134.5" width="1.1" height="3" fill="#3a3a3a"/><rect x="502.1" y="133" width="1.2" height="4.6" fill="#333"/><rect x="527.6" y="134.5" width="1.1" height="3" fill="#3a3a3a"/><rect x="552.9" y="134.5" width="1.1" height="3" fill="#3a3a3a"/><rect x="578.2" y="133" width="1.2" height="4.6" fill="#333"/><rect x="603.6" y="134.5" width="1.1" height="3" fill="#3a3a3a"/><rect x="629.0" y="134.5" width="1.1" height="3" fill="#3a3a3a"/><rect x="654.2" y="133" width="1.2" height="4.6" fill="#333"/><rect x="679.7" y="134.5" width="1.1" height="3" fill="#3a3a3a"/><rect x="705.0" y="134.5" width="1.1" height="3" fill="#3a3a3a"/><rect x="730.3" y="133" width="1.2" height="4.6" fill="#333"/><rect x="755.7" y="134.5" width="1.1" height="3" fill="#3a3a3a"/><rect x="781.1" y="134.5" width="1.1" height="3" fill="#3a3a3a"/><rect x="806.3" y="133" width="1.2" height="4.6" fill="#333"/><rect x="831.8" y="134.5" width="1.1" height="3" fill="#3a3a3a"/><rect x="857.1" y="134.5" width="1.1" height="3" fill="#3a3a3a"/><rect x="882.4" y="133" width="1.2" height="4.6" fill="#333"/><rect x="907.8" y="134.5" width="1.1" height="3" fill="#3a3a3a"/><rect x="933.2" y="134.5" width="1.1" height="3" fill="#3a3a3a"/><rect x="958.4" y="133" width="1.2" height="4.6" fill="#333"/><rect x="983.9" y="134.5" width="1.1" height="3" fill="#3a3a3a"/><rect x="1009.2" y="134.5" width="1.1" height="3" fill="#3a3a3a"/><rect x="1034.5" y="133" width="1.2" height="4.6" fill="#333"/><rect x="1059.9" y="134.5" width="1.1" height="3" fill="#3a3a3a"/><rect x="1085.2" y="134.5" width="1.1" height="3" fill="#3a3a3a"/><rect x="1110.6" y="133" width="1.2" height="4.6" fill="#333"/><rect x="1136.0" y="134.5" width="1.1" height="3" fill="#3a3a3a"/><rect x="1161.3" y="134.5" width="1.1" height="3" fill="#3a3a3a"/><rect x="1186.6" y="133" width="1.2" height="4.6" fill="#333"/><rect x="1212.0" y="134.5" width="1.1" height="3" fill="#3a3a3a"/><rect x="1237.4" y="134.5" width="1.1" height="3" fill="#3a3a3a"/><rect x="1262.7" y="133" width="1.2" height="4.6" fill="#333"/><rect x="1288.0" y="134.5" width="1.1" height="3" fill="#3a3a3a"/><rect x="1313.4" y="134.5" width="1.1" height="3" fill="#3a3a3a"/><rect x="1338.7" y="133" width="1.2" height="4.6" fill="#333"/><rect x="1364.1" y="134.5" width="1.1" height="3" fill="#3a3a3a"/><rect x="1389.5" y="134.5" width="1.1" height="3" fill="#3a3a3a"/><rect x="1414.8" y="133" width="1.2" height="4.6" fill="#333"/><rect x="1440.1" y="134.5" width="1.1" height="3" fill="#3a3a3a"/><rect x="1465.5" y="134.5" width="1.1" height="3" fill="#3a3a3a"/><rect x="1490.8" y="133" width="1.2" height="4.6" fill="#333"/><rect x="1516.2" y="134.5" width="1.1" height="3" fill="#3a3a3a"/><path d="M17 119 H30.4 L23.7 130 Z" fill="#5fc566" stroke="#3d8c44" stroke-width="0.7"/><rect x="1192" y="114" width="1.1" height="23.6" fill="#000"/><path d="M1193.4 125.6 L1198.4 130.6 V137.6 L1193.4 133 Z" fill="#b4b4b4" stroke="#8c8c8c" stroke-width="0.5"/><path d="M121.5 206.5V207.5M122.5 206.5V207.5M123.5 206.5V207.5M124.5 206.5V207.5M125.5 206.5V207.5M126.5 206.5V207.5M127.5 206.5V207.5M128.5 206.5V207.5M129.5 206.5V207.5M130.5 206.5V207.5M131.5 206.5V207.5M132.5 206.5V207.5M133.5 206.5V207.5M134.5 206.5V207.5M135.5 206.5V207.5M136.5 206.5V207.5M137.5 206.5V207.5M138.5 206.5V207.5M139.5 206.5V207.5M140.5 206.5V207.5M141.5 206.5V207.5M142.5 206.5V207.5M143.5 206.5V207.5M144.5 206.5V207.5M145.5 206.5V207.5M146.5 206.5V207.5M147.5 206.5V207.5M148.5 206.5V207.5M149.5 206.5V207.5M150.5 206.5V207.5M151.5 206.5V207.5M152.5 206.5V207.5M153.5 206.5V207.5M154.5 206.5V207.5M155.5 206.5V207.5M156.5 205.9V208.1M157.5 206.5V207.5M158.5 206.5V207.5M159.5 206.1V207.9M160.5 205.6V208.4M161.5 206.5V207.5M162.5 205.4V208.6M163.5 206.5V207.5M164.5 206.5V207.5M165.5 206.5V207.5M166.5 206.4V207.6M167.5 206.5V207.5M168.5 206.2V207.8M169.5 206.4V207.6M170.5 206.5V207.5M171.5 205.6V208.4M172.5 206.5V207.5M173.5 206.5V207.5M174.5 206.5V207.5M175.5 206.5V207.5M176.5 206.5V207.5M177.5 205.4V208.6M178.5 206.5V207.5M179.5 206.5V207.5M180.5 206.5V207.5M181.5 206.2V207.8M182.5 206.3V207.7M183.5 206.5V207.5M184.5 205.6V208.4M185.5 205.4V208.6M186.5 206.5V207.5M187.5 206.2V207.8M188.5 206.5V207.5M189.5 206.5V207.5M190.5 206.5V207.5M191.5 206.3V207.7M192.5 206.5V207.5M193.5 206.5V207.5M194.5 206.3V207.7M195.5 205.4V208.6M196.5 206.5V207.5M197.5 206.2V207.8M198.5 206.3V207.7M199.5 206.5V207.5M200.5 205.8V208.2M201.5 206.2V207.8M202.5 206.5V207.5M203.5 205.8V208.2M204.5 206.0V208.0M205.5 206.1V207.9M206.5 206.5V207.5M207.5 206.5V207.5M208.5 205.5V208.5M209.5 206.0V208.0M210.5 206.5V207.5M211.5 206.5V207.5M212.5 205.4V208.6M213.5 206.1V207.9M214.5 206.5V207.5M215.5 206.1V207.9M216.5 206.3V207.7M217.5 206.5V207.5M218.5 205.8V208.2M219.5 205.9V208.1M220.5 206.5V207.5M221.5 206.5V207.5M222.5 206.5V207.5M223.5 206.5V207.5M224.5 206.2V207.8M225.5 206.5V207.5M226.5 206.5V207.5M227.5 206.2V207.8M228.5 206.5V207.5M229.5 206.5V207.5M230.5 205.4V208.6M231.5 206.5V207.5M232.5 206.5V207.5M233.5 206.3V207.7M234.5 205.4V208.6M235.5 205.7V208.3M236.5 205.6V208.4M237.5 199.1V214.6M238.5 195.0V219.6M239.5 196.0V215.9M240.5 195.0V216.0M241.5 201.4V222.1M242.5 195.9V219.8M243.5 199.5V220.6M244.5 199.2V216.4M245.5 202.9V214.6M246.5 204.7V210.1M247.5 205.8V208.2M248.5 205.4V208.6M249.5 202.9V217.5M250.5 200.0V218.1M251.5 196.3V218.5M252.5 198.6V217.5M253.5 198.1V218.7M254.5 201.8V218.1M255.5 196.0V213.8M256.5 201.4V215.3M257.5 198.9V220.8M258.5 196.7V218.8M259.5 199.1V218.6M260.5 201.3V212.6M261.5 203.7V215.3M262.5 202.7V211.6M263.5 205.2V208.9M264.5 206.5V207.5M265.5 206.5V207.5M266.5 206.5V207.5M267.5 206.5V207.5M268.5 206.5V207.5M269.5 206.5V207.5M270.5 206.5V207.5M271.5 206.5V207.5M272.5 206.5V207.5M273.5 197.2V220.5M274.5 195.7V219.1M275.5 200.7V225.0M276.5 194.7V219.5M277.5 199.3V220.4M278.5 197.7V224.8M279.5 200.2V225.0M280.5 194.0V220.4M281.5 196.6V219.4M282.5 199.3V220.6M283.5 197.7V220.3M284.5 199.4V216.8M285.5 203.1V214.5M286.5 204.1V210.4M287.5 206.5V207.5M288.5 206.5V207.5M289.5 206.5V207.5M290.5 206.5V207.5M291.5 206.5V207.5M292.5 206.5V207.5M293.5 206.5V207.5M294.5 206.5V207.5M295.5 206.5V207.5M296.5 206.5V207.5M297.5 206.5V207.5M298.5 206.5V207.5M299.5 206.5V207.5M300.5 206.5V207.5M301.5 206.5V207.5M302.5 199.6V216.0M303.5 202.1V214.3M304.5 197.0V219.0M305.5 198.7V216.1M306.5 199.8V213.9M307.5 197.0V213.0M308.5 197.2V217.3M309.5 202.1V215.8M310.5 200.5V212.0M311.5 202.2V213.0M312.5 204.8V208.5M313.5 205.2V208.8M314.5 205.4V208.6M315.5 186.0V234.0M316.5 196.5V234.0M317.5 193.9V230.0M318.5 201.1V217.5M319.5 201.2V220.5M320.5 196.4V222.3M321.5 200.1V217.1M322.5 196.6V216.5M323.5 199.8V223.0M324.5 199.2V220.2M325.5 200.4V214.0M326.5 202.7V211.9M327.5 202.8V214.9M328.5 205.8V210.5M329.5 206.5V207.5M330.5 206.5V207.5M331.5 206.5V207.5M332.5 206.5V207.5M333.5 206.5V207.5M334.5 206.5V207.5M335.5 206.5V207.5M336.5 206.5V207.5M337.5 206.5V207.5M338.5 201.0V224.2M339.5 194.6V218.9M340.5 197.5V220.3M341.5 193.0V222.5M342.5 193.8V223.7M343.5 193.5V228.9M344.5 193.9V228.2M345.5 192.0V229.5M346.5 193.5V227.5M347.5 198.4V226.8M348.5 199.0V218.9M349.5 194.3V225.5M350.5 195.7V223.2M351.5 200.2V220.8M352.5 199.0V213.4M353.5 204.0V212.1M354.5 206.5V207.5M355.5 206.5V207.5M356.5 206.5V207.5M357.5 206.5V207.5M358.5 206.5V207.5M359.5 206.5V207.5M360.5 206.5V207.5M361.5 206.5V207.5M362.5 206.5V207.5M363.5 206.5V207.5M364.5 206.5V207.5M365.5 206.5V207.5M366.5 206.5V207.5M367.5 193.2V222.8M368.5 186.0V238.7M369.5 178.8V243.2M370.5 177.7V245.0M371.5 177.9V240.9M372.5 184.8V230.1M373.5 189.4V224.7M374.5 180.3V245.0M375.5 190.7V231.1M376.5 184.8V237.6M377.5 184.5V245.0M378.5 179.9V245.0M379.5 179.4V236.6M380.5 189.1V238.0M381.5 192.9V232.3M382.5 187.0V230.0M383.5 194.0V219.1M384.5 197.6V216.5M385.5 201.4V215.4M386.5 195.4V221.4M387.5 188.3V219.6M388.5 193.5V234.0M389.5 184.0V231.1M390.5 195.9V221.1M391.5 199.6V216.1M392.5 204.1V212.1M393.5 205.9V208.1M394.5 205.8V208.2M395.5 205.7V208.3M396.5 205.5V208.5M397.5 205.9V208.1M398.5 205.7V208.3M399.5 163.0V244.0M400.5 163.0V226.8M401.5 169.9V227.6M402.5 183.6V242.0M403.5 177.0V230.8M404.5 186.3V232.8M405.5 180.5V229.8M406.5 196.6V224.5M407.5 193.7V224.5M408.5 202.8V214.7M409.5 205.4V208.6M410.5 197.5V220.8M411.5 193.5V219.3M412.5 192.6V232.0M413.5 190.9V231.8M414.5 189.7V221.2M415.5 196.2V219.6M416.5 191.1V222.9M417.5 193.5V232.0M418.5 189.0V225.8M419.5 195.5V230.8M420.5 192.1V220.2M421.5 189.1V221.8M422.5 188.0V232.0M423.5 196.4V231.8M424.5 196.0V226.1M425.5 190.7V228.4M426.5 196.4V217.6M427.5 199.5V220.2M428.5 194.8V220.0M429.5 201.2V221.0M430.5 200.5V217.0M431.5 203.4V211.0M432.5 206.0V208.0M433.5 205.2V208.8M434.5 187.6V221.8M435.5 180.4V228.6M436.5 179.0V225.4M437.5 180.5V231.8M438.5 185.0V229.8M439.5 197.2V221.5M440.5 201.9V211.7M441.5 205.4V208.6M442.5 205.6V208.4M443.5 205.3V208.7M444.5 205.7V208.3M445.5 191.2V218.9M446.5 188.4V226.9M447.5 188.2V222.7M448.5 187.1V234.0M449.5 186.0V233.3M450.5 186.0V224.2M451.5 188.1V225.2M452.5 196.8V219.9M453.5 191.7V233.0M454.5 195.0V223.7M455.5 195.1V231.6M456.5 195.4V234.0M457.5 190.2V234.0M458.5 196.1V230.0M459.5 187.5V228.2M460.5 189.0V223.2M461.5 190.5V228.2M462.5 198.2V222.8M463.5 196.0V223.3M464.5 199.5V221.8M465.5 198.5V213.9M466.5 202.4V211.4M467.5 205.3V208.7M468.5 205.2V208.8M469.5 205.3V208.7M470.5 205.4V208.6M471.5 205.3V208.7M472.5 205.2V208.8M473.5 205.7V208.3M474.5 205.4V208.6M475.5 198.7V226.5M476.5 195.9V229.6M477.5 193.4V221.6M478.5 198.4V225.4M479.5 189.0V226.0M480.5 192.5V224.0M481.5 193.7V226.1M482.5 189.0V232.3M483.5 197.3V227.0M484.5 193.5V226.7M485.5 197.4V218.1M486.5 201.7V219.6M487.5 198.0V220.0M488.5 204.1V211.0M489.5 205.3V208.7M490.5 205.2V208.8M491.5 205.5V208.5M492.5 205.4V208.6M493.5 205.7V208.3M494.5 205.5V208.5M495.5 205.5V208.5M496.5 205.9V208.1M497.5 183.6V220.1M498.5 180.6V242.0M499.5 185.0V223.9M500.5 181.0V242.0M501.5 175.4V242.0M502.5 177.8V242.0M503.5 172.8V229.4M504.5 193.2V227.7M505.5 194.6V230.1M506.5 189.5V223.5M507.5 199.3V214.7M508.5 205.3V208.7M509.5 186.0V225.3M510.5 190.3V228.2M511.5 180.0V225.4M512.5 184.9V220.5M513.5 193.2V225.1M514.5 185.2V233.3M515.5 181.4V235.0M516.5 188.9V235.0M517.5 191.4V222.7M518.5 190.2V230.9M519.5 186.3V220.8M520.5 189.7V224.3M521.5 198.6V216.4M522.5 200.8V211.0M523.5 205.6V208.4M524.5 205.2V208.8M525.5 205.9V208.1M526.5 205.3V208.7M527.5 206.0V208.0M528.5 205.5V208.5M529.5 205.6V208.4M530.5 192.3V231.9M531.5 192.9V245.0M532.5 178.9V231.2M533.5 192.3V245.0M534.5 177.0V236.7M535.5 177.0V235.6M536.5 189.4V244.1M537.5 193.0V226.0M538.5 193.8V230.2M539.5 192.0V226.0M540.5 201.7V213.4M541.5 198.6V220.5M542.5 192.0V221.8M543.5 189.0V221.4M544.5 194.9V215.9M545.5 189.4V217.7M546.5 197.5V214.3M547.5 202.4V216.0M548.5 203.9V210.3M549.5 199.9V224.2M550.5 193.4V218.3M551.5 192.7V230.0M552.5 194.1V228.7M553.5 190.6V219.9M554.5 189.3V220.7M555.5 194.7V219.9M556.5 200.2V214.0M557.5 202.6V212.1M558.5 205.8V208.2M559.5 205.8V208.2M560.5 205.2V208.8M561.5 205.4V208.6M562.5 194.9V219.2M563.5 195.1V221.7M564.5 194.1V219.0M565.5 194.0V225.9M566.5 189.5V226.8M567.5 192.9V223.8M568.5 188.4V228.7M569.5 188.5V220.2M570.5 193.8V220.5M571.5 196.4V216.8M572.5 196.0V220.0M573.5 204.6V212.7M574.5 193.8V231.0M575.5 184.5V233.8M576.5 188.6V235.5M577.5 192.1V234.1M578.5 185.2V236.3M579.5 189.8V233.9M580.5 184.7V223.9M581.5 182.0V224.9M582.5 182.0V238.5M583.5 189.8V232.6M584.5 182.2V239.0M585.5 194.9V226.7M586.5 182.0V227.4M587.5 189.0V228.2M588.5 185.8V225.2M589.5 188.3V234.1M590.5 187.4V232.1M591.5 197.8V229.0M592.5 190.9V220.1M593.5 199.3V221.6M594.5 198.0V223.0M595.5 204.3V214.0M596.5 194.9V231.8M597.5 180.1V230.8M598.5 187.5V223.2M599.5 183.9V227.1M600.5 178.8V229.5M601.5 185.6V231.4M602.5 199.7V217.8M603.5 200.6V210.4M604.5 205.7V208.3M605.5 205.5V208.5M606.5 196.9V222.6M607.5 182.1V225.9M608.5 178.0V234.8M609.5 187.4V230.5M610.5 193.6V228.1M611.5 192.9V223.8M612.5 195.3V216.1M613.5 203.0V210.1M614.5 205.2V208.8M615.5 205.2V208.8M616.5 197.1V223.1M617.5 184.0V219.9M618.5 191.1V218.6M619.5 194.5V228.4M620.5 196.2V219.5M621.5 197.3V216.8M622.5 194.0V217.9M623.5 196.3V220.0M624.5 194.0V219.9M625.5 194.3V217.3M626.5 198.0V215.9M627.5 202.0V210.4M628.5 205.0V209.3M629.5 206.5V207.5M630.5 206.5V207.5M631.5 206.5V207.5M632.5 206.5V207.5M633.5 206.5V207.5M634.5 206.5V207.5M635.5 206.5V207.5M636.5 206.5V207.5M637.5 206.5V207.5M638.5 206.5V207.5M639.5 206.5V207.5M640.5 206.5V207.5M641.5 206.5V207.5M642.5 206.5V207.5M643.5 206.5V207.5M644.5 206.5V207.5M645.5 206.5V207.5M646.5 206.5V207.5M647.5 206.5V207.5M648.5 206.5V207.5M649.5 206.5V207.5M650.5 206.5V207.5M651.5 206.5V207.5M652.5 206.5V207.5M653.5 206.5V207.5M654.5 206.5V207.5M655.5 206.5V207.5M656.5 206.5V207.5M657.5 206.5V207.5M658.5 201.3V216.4M659.5 200.8V219.8M660.5 194.0V222.4M661.5 194.1V220.7M662.5 194.1V223.0M663.5 194.1V218.6M664.5 196.7V222.1M665.5 196.4V220.0M666.5 199.8V213.3M667.5 200.5V214.4M668.5 204.7V208.8M669.5 205.8V208.2M670.5 205.8V208.2M671.5 194.5V218.5M672.5 187.2V226.3M673.5 184.0V233.0M674.5 192.1V233.0M675.5 194.2V224.4M676.5 185.2V233.0M677.5 188.6V233.0M678.5 184.0V225.0M679.5 192.5V227.8M680.5 185.4V220.6M681.5 187.9V218.4M682.5 190.4V219.2M683.5 195.3V220.6M684.5 199.2V214.0M685.5 202.4V210.9M686.5 205.7V208.3M687.5 205.2V208.8M688.5 205.1V208.9M689.5 205.6V208.4M690.5 205.9V208.1M691.5 206.0V208.0M692.5 205.2V208.8M693.5 206.0V208.0M694.5 195.4V218.6M695.5 195.3V221.0M696.5 192.3V226.8M697.5 196.3V227.7M698.5 199.1V223.5M699.5 191.4V221.8M700.5 191.0V223.4M701.5 197.5V223.5M702.5 192.3V231.0M703.5 191.9V219.2M704.5 193.7V226.2M705.5 193.3V217.0M706.5 198.8V220.4M707.5 198.3V223.3M708.5 200.6V220.0M709.5 199.0V213.0M710.5 204.1V212.3M711.5 205.3V208.7M712.5 206.0V208.0M713.5 205.9V208.1M714.5 205.6V208.4M715.5 206.0V208.0M716.5 205.3V208.7M717.5 205.8V208.2M718.5 205.9V208.1M719.5 206.0V208.0M720.5 205.4V208.6M721.5 202.1V211.8M722.5 201.9V213.6M723.5 198.4V214.2M724.5 198.2V219.0M725.5 197.8V219.0M726.5 200.5V219.0M727.5 198.1V219.0M728.5 197.7V212.9M729.5 202.1V215.3M730.5 203.9V211.5M731.5 202.0V212.5M732.5 205.4V209.6M733.5 205.3V208.7M734.5 205.1V208.9M735.5 197.5V219.5M736.5 200.3V215.7M737.5 193.5V225.0M738.5 186.0V235.0M739.5 187.7V235.0M740.5 197.4V216.4M741.5 195.4V221.6M742.5 194.7V220.1M743.5 197.1V222.5M744.5 195.9V219.9M745.5 195.7V225.0M746.5 195.1V220.6M747.5 198.8V218.9M748.5 197.7V225.0M749.5 191.4V224.3M750.5 192.8V217.7M751.5 198.6V218.9M752.5 198.0V220.9M753.5 201.3V214.6M754.5 200.0V217.6M755.5 199.5V212.2M756.5 201.9V212.7M757.5 204.2V211.0M758.5 206.5V207.5M759.5 206.5V207.5M760.5 193.2V222.9M761.5 196.1V234.0M762.5 196.4V231.0M763.5 184.0V233.7M764.5 190.9V231.2M765.5 191.0V221.7M766.5 195.5V221.6M767.5 184.0V221.6M768.5 185.1V234.3M769.5 193.5V231.0M770.5 190.0V221.8M771.5 197.5V221.3M772.5 197.4V221.0M773.5 202.6V213.2M774.5 205.8V208.2M775.5 206.0V208.0M776.5 205.6V208.4M777.5 205.4V208.6M778.5 205.8V208.2M779.5 205.8V208.2M780.5 205.7V208.3M781.5 205.4V208.6M782.5 205.5V208.5M783.5 205.4V208.6M784.5 205.3V208.7M785.5 205.6V208.4M786.5 205.3V208.7M787.5 191.0V224.3M788.5 185.0V232.3M789.5 185.4V239.6M790.5 186.0V242.1M791.5 178.8V249.0M792.5 177.1V234.9M793.5 180.8V239.0M794.5 183.7V237.4M795.5 190.0V249.0M796.5 179.4V239.2M797.5 189.1V247.9M798.5 174.0V249.0M799.5 174.0V240.2M800.5 181.4V246.7M801.5 186.9V245.0M802.5 180.9V237.7M803.5 194.8V231.8M804.5 192.9V222.9M805.5 194.0V223.5M806.5 196.7V229.2M807.5 194.6V225.0M808.5 200.1V216.2M809.5 192.5V218.3M810.5 192.9V222.2M811.5 192.3V224.6M812.5 187.5V218.9M813.5 191.3V224.1M814.5 201.8V218.4M815.5 202.6V212.1M816.5 205.4V208.6M817.5 205.2V208.8M818.5 205.7V208.3M819.5 205.5V208.5M820.5 185.1V240.4M821.5 169.0V240.4M822.5 185.7V240.5M823.5 185.5V244.8M824.5 187.9V239.5M825.5 178.0V231.0M826.5 175.1V250.5M827.5 170.5V252.0M828.5 180.1V241.2M829.5 174.4V244.2M830.5 179.0V222.8M831.5 183.5V220.2M832.5 191.2V223.7M833.5 198.6V211.6M834.5 188.5V227.5M835.5 192.6V219.5M836.5 187.6V229.3M837.5 189.4V237.0M838.5 193.5V224.9M839.5 191.0V224.7M840.5 188.4V237.0M841.5 192.4V225.7M842.5 186.4V237.0M843.5 182.0V224.8M844.5 182.1V226.8M845.5 182.0V227.1M846.5 184.9V226.3M847.5 191.6V230.4M848.5 185.0V220.7M849.5 184.3V234.2M850.5 187.4V231.7M851.5 188.4V219.4M852.5 197.1V218.3M853.5 193.4V225.6M854.5 199.5V224.0M855.5 194.5V216.7M856.5 203.9V210.5M857.5 205.4V208.6M858.5 205.3V208.7M859.5 171.0V237.0M860.5 171.0V224.4M861.5 175.7V237.0M862.5 205.8V208.2M863.5 205.2V208.8M864.5 205.1V208.9M865.5 205.1V208.9M866.5 194.1V228.9M867.5 183.4V230.9M868.5 187.8V228.4M869.5 194.2V245.0M870.5 192.2V245.0M871.5 194.3V229.0M872.5 180.0V245.0M873.5 190.1V225.3M874.5 189.2V234.2M875.5 189.4V242.6M876.5 186.7V233.9M877.5 191.2V243.7M878.5 192.2V234.9M879.5 192.1V239.3M880.5 192.3V245.0M881.5 185.6V230.5M882.5 184.0V240.8M883.5 190.8V226.0M884.5 192.4V221.7M885.5 191.9V233.0M886.5 198.4V228.3M887.5 193.4V219.8M888.5 197.7V221.4M889.5 202.7V212.2M890.5 205.2V208.8M891.5 205.2V208.8M892.5 205.7V208.3M893.5 205.9V208.1M894.5 205.6V208.4M895.5 205.5V208.5M896.5 205.3V208.7M897.5 186.8V222.7M898.5 183.7V242.3M899.5 183.0V238.2M900.5 192.0V240.3M901.5 181.2V224.5M902.5 183.0V236.2M903.5 185.2V244.0M904.5 180.3V244.0M905.5 184.5V239.2M906.5 180.0V238.5M907.5 185.5V236.7M908.5 185.9V231.0M909.5 188.0V219.3M910.5 197.5V225.1M911.5 197.0V225.5M912.5 202.2V213.8M913.5 205.9V208.1M914.5 205.3V208.7M915.5 205.8V208.2M916.5 205.7V208.3M917.5 205.3V208.7M918.5 205.9V208.1M919.5 181.1V235.6M920.5 178.4V246.2M921.5 185.0V247.0M922.5 173.7V237.0M923.5 185.6V229.7M924.5 171.0V226.9M925.5 180.2V245.9M926.5 182.5V230.5M927.5 190.2V231.7M928.5 186.2V231.5M929.5 193.5V226.0M930.5 189.0V227.0M931.5 190.0V222.9M932.5 188.4V237.0M933.5 177.0V231.3M934.5 177.0V242.0M935.5 188.8V242.0M936.5 186.3V233.9M937.5 182.7V242.0M938.5 177.0V225.5M939.5 192.9V224.5M940.5 192.4V239.1M941.5 164.0V242.0M942.5 180.2V227.3M943.5 194.5V221.4M944.5 193.7V221.7M945.5 202.4V212.4M946.5 205.1V208.9M947.5 205.9V208.1M948.5 205.8V208.2M949.5 205.5V208.5M950.5 205.7V208.3M951.5 205.3V208.7M952.5 189.1V225.7M953.5 181.9V244.4M954.5 154.0V260.0M955.5 163.4V252.6M956.5 172.9V239.6M957.5 178.6V230.3M958.5 172.4V247.0M959.5 184.7V239.5M960.5 191.1V238.4M961.5 185.6V219.7M962.5 187.8V223.1M963.5 184.4V232.6M964.5 183.5V231.4M965.5 192.1V235.2M966.5 179.8V226.5M967.5 186.6V224.6M968.5 184.1V226.7M969.5 191.9V232.2M970.5 179.1V231.6M971.5 182.6V223.0M972.5 183.7V236.0M973.5 179.0V231.0M974.5 186.0V222.9M975.5 183.6V233.8M976.5 196.3V228.4M977.5 188.3V224.9M978.5 191.9V217.7M979.5 193.0V221.9M980.5 203.1V211.9M981.5 205.5V208.5M982.5 205.5V208.5M983.5 205.8V208.2M984.5 205.5V208.5M985.5 186.3V236.8M986.5 179.2V228.6M987.5 182.6V234.7M988.5 178.1V229.1M989.5 186.8V244.5M990.5 184.0V247.0M991.5 177.8V226.8M992.5 174.5V226.0M993.5 179.7V238.4M994.5 195.4V232.7M995.5 194.7V227.9M996.5 190.0V225.6M997.5 162.0V247.0M998.5 185.9V232.1M999.5 192.9V238.2M1000.5 190.0V238.9M1001.5 185.0V235.4M1002.5 188.9V231.9M1003.5 186.8V237.1M1004.5 180.0V228.2M1005.5 180.0V227.9M1006.5 182.4V235.2M1007.5 188.0V229.9M1008.5 180.1V241.0M1009.5 191.0V240.5M1010.5 190.8V237.0M1011.5 183.0V237.2M1012.5 184.7V229.6M1013.5 187.2V225.0M1014.5 192.5V220.1M1015.5 193.0V219.4M1016.5 197.2V226.2M1017.5 193.5V224.0M1018.5 201.8V211.8M1019.5 194.3V228.1M1020.5 174.0V242.0M1021.5 174.0V242.0M1022.5 188.9V232.1M1023.5 174.8V238.0M1024.5 182.6V231.9M1025.5 196.0V222.8M1026.5 202.9V212.6M1027.5 164.0V247.0M1028.5 182.9V230.5M1029.5 171.0V246.6M1030.5 178.3V247.0M1031.5 196.1V223.5M1032.5 197.5V228.8M1033.5 196.2V229.0M1034.5 192.4V223.1M1035.5 197.7V224.3M1036.5 197.0V212.3M1037.5 203.0V210.8M1038.5 205.6V208.4M1039.5 179.0V237.0M1040.5 179.0V221.4M1041.5 179.0V222.2M1042.5 196.5V218.2M1043.5 193.0V222.0M1044.5 193.0V215.3M1045.5 197.7V215.1M1046.5 193.0V217.7M1047.5 193.0V216.6M1048.5 197.7V215.6M1049.5 202.0V213.8M1050.5 200.0V214.1M1051.5 205.1V209.9M1052.5 206.5V207.5M1053.5 206.5V207.5M1054.5 206.5V207.5M1055.5 206.5V207.5M1056.5 206.5V207.5M1057.5 206.5V207.5M1058.5 206.5V207.5M1059.5 206.5V207.5M1060.5 206.5V207.5M1061.5 206.5V207.5M1062.5 206.5V207.5M1063.5 206.5V207.5M1064.5 206.5V207.5M1065.5 206.5V207.5M1066.5 206.5V207.5M1067.5 206.5V207.5M1068.5 206.5V207.5M1069.5 206.5V207.5M1070.5 206.5V207.5M1071.5 206.5V207.5M1072.5 206.5V207.5M1073.5 206.5V207.5M1074.5 206.5V207.5M1075.5 206.5V207.5M1076.5 206.5V207.5M1077.5 206.5V207.5M1078.5 206.5V207.5M1079.5 206.5V207.5M1080.5 206.5V207.5M1081.5 206.5V207.5M1082.5 206.5V207.5M1083.5 206.5V207.5M1084.5 185.4V220.9M1085.5 180.8V224.2M1086.5 179.2V228.6M1087.5 178.7V232.5M1088.5 179.6V240.0M1089.5 177.0V232.2M1090.5 192.2V233.4M1091.5 183.4V225.6M1092.5 180.5V224.7M1093.5 184.2V230.0M1094.5 188.1V227.8M1095.5 197.4V217.0M1096.5 203.7V213.1M1097.5 205.2V208.8M1098.5 205.8V208.2M1099.5 205.6V208.4M1100.5 186.0V227.8M1101.5 186.9V226.5M1102.5 174.0V231.9M1103.5 174.6V237.0M1104.5 174.0V227.5M1105.5 181.6V237.0M1106.5 190.1V221.4M1107.5 179.6V229.7M1108.5 174.0V231.2M1109.5 174.0V223.4M1110.5 191.1V228.4M1111.5 193.0V226.9M1112.5 189.4V223.4M1113.5 187.4V218.1M1114.5 195.2V214.0M1115.5 201.3V213.6M1116.5 195.8V226.5M1117.5 182.6V227.0M1118.5 182.0V229.2M1119.5 188.1V230.7M1120.5 179.0V229.3M1121.5 191.8V224.8M1122.5 182.6V230.1M1123.5 179.0V226.0M1124.5 179.0V224.5M1125.5 184.3V238.0M1126.5 183.8V228.5M1127.5 194.1V230.8M1128.5 198.8V223.3M1129.5 193.0V216.4M1130.5 202.6V214.3M1131.5 205.8V208.2M1132.5 187.6V220.1M1133.5 182.5V228.4M1134.5 178.5V242.0M1135.5 182.8V241.1M1136.5 175.0V229.1M1137.5 179.2V229.5M1138.5 175.0V242.0M1139.5 189.4V238.7M1140.5 175.0V230.1M1141.5 181.8V225.5M1142.5 184.0V234.8M1143.5 181.6V226.2M1144.5 191.6V223.2M1145.5 194.5V226.3M1146.5 192.4V218.7M1147.5 202.6V211.0M1148.5 205.3V208.7M1149.5 193.5V225.8M1150.5 189.3V230.1M1151.5 191.3V221.5M1152.5 194.1V221.2M1153.5 189.0V228.3M1154.5 189.0V232.0M1155.5 198.0V232.0M1156.5 194.3V232.0M1157.5 194.6V223.3M1158.5 190.8V230.5M1159.5 193.6V227.7M1160.5 194.0V219.3M1161.5 198.5V221.4M1162.5 199.7V215.9M1163.5 204.8V211.1M1164.5 205.4V208.6M1165.5 191.2V227.6M1166.5 183.6V237.9M1167.5 193.3V239.3M1168.5 189.2V232.2M1169.5 191.0V240.0M1170.5 188.1V240.0M1171.5 191.9V235.9M1172.5 182.0V231.5M1173.5 182.0V240.0M1174.5 192.8V240.0M1175.5 182.2V240.0M1176.5 183.3V237.8M1177.5 185.6V235.3M1178.5 196.5V221.8M1179.5 194.9V218.8M1180.5 195.1V223.5M1181.5 198.2V218.8M1182.5 202.4V213.1M1183.5 205.9V208.1M1184.5 205.3V208.7M1185.5 205.9V208.1M1186.5 205.5V208.5M1187.5 205.8V208.2M1188.5 205.8V208.2M1189.5 205.5V208.5M1190.5 205.6V208.4M1191.5 205.7V208.3M1192.5 205.6V208.4M1193.5 205.5V208.5M1194.5 205.9V208.1M1195.5 205.8V208.2M1196.5 205.4V208.6M1197.5 195.7V220.4M1198.5 194.6V224.2M1199.5 181.5V224.6M1200.5 189.4V226.8M1201.5 179.0V244.0M1202.5 182.5V228.6M1203.5 192.9V227.8M1204.5 183.0V230.1M1205.5 187.0V239.9M1206.5 180.2V236.0M1207.5 179.0V243.8M1208.5 192.3V230.1M1209.5 185.7V226.4M1210.5 189.8V222.1M1211.5 192.6V234.0M1212.5 197.7V221.6M1213.5 190.6V217.7M1214.5 196.4V219.5M1215.5 204.1V213.7M1216.5 205.4V208.6M1217.5 205.2V208.8M1218.5 205.8V208.2M1219.5 205.3V208.7M1220.5 205.3V208.7M1221.5 205.2V208.8M1222.5 205.7V208.3M1223.5 205.7V208.3M1224.5 205.2V208.8M1225.5 205.8V208.2M1226.5 205.1V208.9M1227.5 205.2V208.8M1228.5 205.9V208.1M1229.5 205.8V208.2M1230.5 205.3V208.7M1231.5 184.5V223.8M1232.5 178.9V225.1M1233.5 192.9V241.6M1234.5 177.0V224.5M1235.5 184.2V233.9M1236.5 185.0V239.9M1237.5 181.4V237.5M1238.5 183.8V234.5M1239.5 192.4V239.0M1240.5 178.5V225.0M1241.5 177.8V244.0M1242.5 182.4V232.4M1243.5 182.9V221.7M1244.5 185.5V235.4M1245.5 186.6V228.5M1246.5 193.8V217.4M1247.5 199.3V225.5M1248.5 202.4V215.1M1249.5 205.6V208.4M1250.5 205.3V208.7M1251.5 205.9V208.1M1252.5 205.6V208.4M1253.5 205.4V208.6M1254.5 206.0V208.0M1255.5 205.8V208.2M1256.5 205.4V208.6M1257.5 205.2V208.8M1258.5 205.1V208.9M1259.5 205.9V208.1M1260.5 205.5V208.5M1261.5 205.3V208.7M1262.5 191.6V225.9M1263.5 183.5V240.6M1264.5 178.0V228.6M1265.5 181.2V236.1M1266.5 175.0V244.0M1267.5 175.0V240.8M1268.5 188.1V239.7M1269.5 190.5V243.3M1270.5 184.1V238.9M1271.5 187.6V234.5M1272.5 181.2V244.0M1273.5 189.4V241.3M1274.5 181.9V236.1M1275.5 194.7V231.3M1276.5 196.5V219.4M1277.5 189.2V228.7M1278.5 193.9V222.4M1279.5 203.5V214.7M1280.5 205.9V208.1M1281.5 205.9V208.1M1282.5 206.0V208.0M1283.5 205.5V208.5M1284.5 205.5V208.5M1285.5 205.5V208.5M1286.5 205.9V208.1M1287.5 205.8V208.2M1288.5 205.8V208.2M1289.5 205.2V208.8M1290.5 205.1V208.9M1291.5 205.2V208.8M1292.5 205.9V208.1M1293.5 205.9V208.1M1294.5 205.1V208.9M1295.5 186.8V225.0M1296.5 171.4V227.4M1297.5 184.5V231.5M1298.5 175.3V249.0M1299.5 171.7V240.1M1300.5 169.0V234.0M1301.5 188.4V241.8M1302.5 177.1V244.6M1303.5 169.0V236.7M1304.5 176.4V245.9M1305.5 189.4V245.2M1306.5 178.9V243.6M1307.5 183.9V243.0M1308.5 188.4V228.0M1309.5 181.2V230.7M1310.5 191.9V220.0M1311.5 190.0V228.0M1312.5 198.6V212.4M1313.5 206.5V207.5M1314.5 206.5V207.5M1315.5 206.5V207.5M1316.5 206.5V207.5M1317.5 206.5V207.5M1318.5 206.5V207.5M1319.5 206.5V207.5M1320.5 206.5V207.5M1321.5 206.5V207.5M1322.5 206.5V207.5M1323.5 206.5V207.5M1324.5 206.5V207.5M1325.5 206.5V207.5M1326.5 206.5V207.5M1327.5 206.5V207.5M1328.5 206.5V207.5M1329.5 206.5V207.5M1330.5 206.5V207.5M1331.5 206.5V207.5M1332.5 206.5V207.5" stroke="#3636cc" stroke-width="1.2" fill="none"/><path d="M237.5 204.4V209.4M238.5 204.0V210.6M239.5 204.3V210.6M240.5 204.5V210.3M241.5 204.3V211.0M242.5 203.7V210.8M243.5 204.3V210.5M244.5 204.8V208.9M245.5 205.7V209.0M249.5 204.7V209.8M250.5 204.0V209.6M251.5 204.2V210.3M252.5 204.1V209.6M253.5 203.7V210.1M254.5 204.5V210.8M255.5 204.4V209.5M256.5 204.1V209.7M257.5 204.6V209.8M258.5 204.3V209.7M259.5 204.6V210.0M260.5 204.6V209.6M261.5 205.2V208.7M262.5 205.4V208.3M273.5 204.5V209.4M274.5 204.3V211.8M275.5 204.2V211.4M276.5 203.7V210.1M277.5 203.4V210.2M278.5 203.2V211.5M279.5 203.8V210.9M280.5 204.4V211.3M281.5 204.4V210.9M282.5 203.7V210.7M283.5 205.0V210.2M284.5 204.8V209.3M285.5 205.2V209.1M302.5 205.2V209.0M303.5 204.7V209.4M304.5 204.1V209.5M305.5 204.2V209.5M306.5 204.8V209.0M307.5 204.0V209.9M308.5 204.1V209.7M309.5 205.3V208.8M310.5 205.7V208.8M315.5 201.5V214.2M316.5 202.2V212.2M317.5 202.3V212.0M318.5 204.8V210.5M319.5 204.3V210.3M320.5 203.8V210.2M321.5 203.9V210.6M322.5 204.7V209.8M323.5 204.1V211.1M324.5 204.9V210.6M325.5 205.1V210.0M326.5 205.0V209.5M327.5 205.8V208.5M338.5 203.4V211.5M339.5 202.5V212.0M340.5 203.7V211.8M341.5 202.3V211.1M342.5 203.3V211.0M343.5 202.4V211.7M344.5 203.7V211.7M345.5 203.5V211.9M346.5 202.8V212.4M347.5 203.6V212.1M348.5 204.0V211.5M349.5 203.4V210.6M350.5 203.8V210.1M351.5 204.7V210.5M352.5 205.4V209.6M367.5 201.3V213.9M368.5 198.8V215.4M369.5 200.3V214.2M370.5 199.6V214.5M371.5 199.3V213.8M372.5 198.9V215.0M373.5 200.9V213.9M374.5 198.2V216.7M375.5 198.4V214.9M376.5 198.0V214.1M377.5 198.8V217.0M378.5 200.4V213.5M379.5 201.1V213.2M380.5 200.0V214.3M381.5 201.4V212.2M382.5 201.7V211.7M383.5 203.3V212.1M384.5 203.0V211.8M385.5 205.1V208.5M386.5 203.0V210.7M387.5 201.3V211.7M388.5 200.4V213.4M389.5 200.5V212.9M390.5 201.7V212.4M391.5 203.7V210.4M392.5 205.9V208.2M399.5 198.0V216.1M400.5 196.1V216.9M401.5 196.9V214.9M402.5 198.4V216.3M403.5 198.7V216.0M404.5 198.2V213.9M405.5 199.3V213.0M406.5 201.1V213.9M407.5 203.2V210.2M408.5 205.3V208.4M410.5 203.5V210.3M411.5 202.9V212.7M412.5 201.8V213.4M413.5 202.3V212.4M414.5 203.1V213.2M415.5 202.1V212.3M416.5 202.9V212.4M417.5 203.1V211.5M418.5 203.0V212.3M419.5 202.9V213.3M420.5 202.0V213.4M421.5 202.1V211.6M422.5 202.7V213.3M423.5 202.1V212.9M424.5 202.4V211.1M425.5 203.4V211.6M426.5 202.8V212.2M427.5 203.5V210.5M428.5 204.5V210.6M429.5 204.4V210.8M430.5 204.9V209.4M434.5 202.8V210.8M435.5 199.1V214.5M436.5 201.0V212.0M437.5 199.8V212.6M438.5 201.2V213.0M439.5 203.2V209.9M440.5 205.4V208.3M445.5 202.7V211.0M446.5 201.6V212.8M447.5 200.9V212.5M448.5 200.8V213.2M449.5 202.3V213.3M450.5 202.1V211.9M451.5 202.7V213.2M452.5 202.3V211.9M453.5 201.2V212.0M454.5 201.2V212.3M455.5 202.0V214.1M456.5 201.1V213.8M457.5 200.7V213.2M458.5 200.8V213.3M459.5 202.0V212.1M460.5 202.7V212.3M461.5 203.3V212.0M462.5 202.7V211.7M463.5 204.0V210.0M464.5 204.2V210.3M465.5 204.0V210.0M475.5 203.6V211.5M476.5 202.4V213.2M477.5 202.4V212.9M478.5 203.0V211.7M479.5 202.6V213.7M480.5 201.7V212.2M481.5 202.4V212.8M482.5 202.6V211.9M483.5 202.1V211.5M484.5 203.6V211.4M485.5 204.1V210.6M486.5 204.7V210.6M487.5 205.0V210.0M497.5 200.2V213.1M498.5 198.3V215.1M499.5 199.0V214.6M500.5 197.6V213.7M501.5 197.4V215.0M502.5 196.6V215.1M503.5 198.3V215.4M504.5 200.5V212.9M505.5 201.4V212.6M506.5 202.2V210.3M507.5 204.7V209.1M509.5 201.8V212.7M510.5 199.7V212.8M511.5 201.2V211.8M512.5 199.7V213.8M513.5 199.7V214.0M514.5 200.2V213.8M515.5 199.7V213.5M516.5 199.9V213.6M517.5 200.0V211.9M518.5 200.6V212.8M519.5 202.0V212.5M520.5 202.7V210.2M521.5 203.5V209.9M522.5 205.7V208.6M530.5 202.1V213.9M531.5 200.5V215.4M532.5 198.0V213.8M533.5 198.4V213.5M534.5 198.1V216.9M535.5 199.7V215.9M536.5 199.8V213.9M537.5 201.2V213.7M538.5 201.3V211.5M539.5 203.2V211.1M540.5 205.3V209.1M541.5 203.5V209.7M542.5 201.7V211.1M543.5 202.9V211.0M544.5 201.8V210.1M545.5 202.3V210.8M546.5 204.0V209.5M547.5 205.0V208.9M549.5 203.4V211.0M550.5 202.5V212.3M551.5 202.1V212.7M552.5 201.4V211.5M553.5 201.0V212.2M554.5 202.8V211.1M555.5 203.2V210.5M556.5 204.3V209.2M562.5 202.3V210.8M563.5 200.7V212.6M564.5 201.7V212.9M565.5 201.4V212.8M566.5 201.4V213.9M567.5 201.0V211.7M568.5 200.4V211.5M569.5 202.8V213.1M570.5 203.1V210.5M571.5 203.9V210.7M572.5 203.9V209.2M574.5 202.9V211.1M575.5 202.4V212.8M576.5 200.8V215.5M577.5 200.4V215.2M578.5 200.5V215.4M579.5 200.3V213.2M580.5 201.1V214.0M581.5 201.7V215.4M582.5 200.8V213.1M583.5 200.8V215.0M584.5 201.3V214.3M585.5 201.8V213.2M586.5 201.5V214.1M587.5 200.3V213.2M588.5 200.8V213.8M589.5 201.1V214.4M590.5 202.4V213.8M591.5 202.6V212.1M592.5 203.5V210.7M593.5 203.2V210.3M594.5 204.5V209.9M595.5 205.8V208.3M596.5 202.1V213.1M597.5 199.9V213.1M598.5 199.2V215.9M599.5 199.4V214.1M600.5 199.8V214.7M601.5 200.9V213.1M602.5 203.7V211.1M603.5 205.7V208.3M606.5 201.5V211.0M607.5 199.6V212.6M608.5 198.5V213.0M609.5 198.8V214.4M610.5 200.1V213.7M611.5 201.7V211.3M612.5 203.9V210.3M613.5 205.1V208.5M616.5 203.0V211.2M617.5 201.6V212.2M618.5 200.6V211.3M619.5 202.1V211.7M620.5 204.5V210.0M621.5 204.8V209.1M622.5 204.1V210.0M623.5 203.8V210.1M624.5 203.8V210.2M625.5 203.8V209.3M626.5 204.6V208.9M627.5 205.5V208.7M658.5 204.6V209.9M659.5 204.2V210.7M660.5 204.2V210.1M661.5 204.2V209.8M662.5 203.2V211.3M663.5 203.9V209.7M664.5 203.5V210.7M665.5 204.8V210.2M666.5 205.2V209.0M667.5 205.2V209.0M671.5 203.1V211.3M672.5 200.7V212.9M673.5 201.2V211.9M674.5 202.2V211.9M675.5 201.2V213.0M676.5 201.3V213.1M677.5 201.1V213.1M678.5 201.5V213.6M679.5 201.2V213.7M680.5 200.5V213.2M681.5 201.7V212.2M682.5 202.8V210.6M683.5 204.1V210.7M684.5 204.4V210.0M685.5 205.7V208.3M694.5 204.1V210.5M695.5 203.5V212.5M696.5 202.4V211.8M697.5 203.3V212.2M698.5 203.1V212.6M699.5 202.6V212.9M700.5 202.5V212.8M701.5 202.2V212.2M702.5 203.1V212.6M703.5 203.3V213.1M704.5 203.2V212.3M705.5 203.4V211.4M706.5 204.5V210.7M707.5 204.3V211.4M708.5 205.0V210.7M709.5 204.6V210.0M721.5 205.3V208.5M722.5 204.1V209.1M723.5 204.7V210.2M724.5 204.3V210.0M725.5 204.2V209.3M726.5 204.5V209.2M727.5 204.6V209.6M728.5 204.4V209.2M729.5 204.9V208.7M730.5 205.5V208.4M735.5 203.9V210.1M736.5 203.1V210.4M737.5 202.3V211.4M738.5 201.6V214.2M739.5 202.4V212.6M740.5 202.9V211.1M741.5 202.3V211.3M742.5 203.7V211.8M743.5 203.1V210.4M744.5 202.6V211.2M745.5 202.4V211.1M746.5 203.4V210.9M747.5 203.1V210.7M748.5 202.9V210.3M749.5 203.5V210.2M750.5 204.1V210.6M751.5 203.3V210.2M752.5 203.4V210.2M753.5 204.0V209.5M754.5 204.0V209.3M755.5 204.4V209.0M756.5 204.6V209.1M760.5 203.2V212.1M761.5 202.0V212.8M762.5 201.5V212.7M763.5 201.6V212.2M764.5 201.5V212.0M765.5 200.6V212.8M766.5 200.8V213.0M767.5 200.2V214.2M768.5 200.9V213.9M769.5 201.3V213.3M770.5 202.9V211.7M771.5 204.1V210.6M772.5 204.3V210.3M773.5 206.0V208.5M787.5 201.9V213.7M788.5 199.6V216.6M789.5 198.3V214.8M790.5 198.2V215.1M791.5 198.4V215.9M792.5 197.2V216.0M793.5 199.5V215.4M794.5 197.2V215.6M795.5 199.6V216.4M796.5 198.2V218.1M797.5 200.1V215.5M798.5 198.0V216.2M799.5 198.1V217.0M800.5 200.1V214.4M801.5 200.3V214.8M802.5 200.8V214.2M803.5 201.5V212.7M804.5 201.0V214.4M805.5 202.4V211.8M806.5 201.9V211.3M807.5 203.5V211.6M808.5 205.3V209.3M809.5 203.2V210.8M810.5 202.3V211.0M811.5 201.4V211.8M812.5 201.3V211.2M813.5 203.2V211.0M814.5 204.8V209.0M820.5 198.6V215.9M821.5 195.6V217.1M822.5 196.6V217.4M823.5 197.6V215.4M824.5 197.0V216.6M825.5 196.8V214.8M826.5 198.3V215.2M827.5 196.5V216.8M828.5 198.5V217.9M829.5 198.8V214.7M830.5 200.3V212.7M831.5 202.2V211.8M832.5 201.4V212.8M833.5 204.9V209.6M834.5 202.2V212.4M835.5 202.3V212.7M836.5 200.5V213.3M837.5 200.4V213.1M838.5 200.4V212.7M839.5 200.8V213.4M840.5 200.7V212.3M841.5 201.4V214.2M842.5 201.6V213.5M843.5 199.5V213.9M844.5 200.2V214.4M845.5 199.6V213.3M846.5 201.0V214.4M847.5 201.9V213.5M848.5 201.5V213.6M849.5 200.8V214.0M850.5 201.7V213.0M851.5 203.0V212.5M852.5 201.8V211.9M853.5 203.0V211.2M854.5 203.6V210.2M855.5 204.3V210.7M856.5 205.6V208.1M859.5 197.6V214.6M860.5 197.5V212.6M861.5 196.4V212.6M866.5 201.9V213.2M867.5 201.8V213.6M868.5 201.1V214.1M869.5 201.5V215.9M870.5 199.8V214.4M871.5 199.0V215.1M872.5 200.4V217.0M873.5 199.8V215.2M874.5 199.6V216.3M875.5 200.8V213.7M876.5 199.6V216.3M877.5 200.0V213.9M878.5 199.6V214.1M879.5 199.4V215.8M880.5 199.9V213.7M881.5 200.9V215.8M882.5 201.9V212.9M883.5 201.6V215.0M884.5 201.6V212.6M885.5 203.1V213.7M886.5 202.2V212.7M887.5 203.6V212.3M888.5 204.3V210.6M889.5 205.6V209.2M897.5 202.9V212.2M898.5 199.9V215.8M899.5 200.9V213.6M900.5 199.3V216.9M901.5 199.1V215.4M902.5 201.4V216.0M903.5 199.8V216.4M904.5 199.5V215.2M905.5 199.0V215.0M906.5 200.4V215.6M907.5 200.2V214.7M908.5 200.6V212.9M909.5 201.5V213.7M910.5 203.2V210.9M911.5 203.5V211.3M912.5 205.2V208.8M919.5 199.6V214.4M920.5 199.2V216.5M921.5 198.2V214.7M922.5 198.8V215.3M923.5 197.2V216.0M924.5 198.6V214.0M925.5 197.0V216.8M926.5 196.8V216.9M927.5 200.4V214.0M928.5 200.3V213.1M929.5 200.6V211.8M930.5 203.4V211.3M931.5 202.4V211.5M932.5 199.3V214.9M933.5 199.4V213.2M934.5 199.3V214.8M935.5 200.1V213.7M936.5 200.5V214.6M937.5 199.9V215.0M938.5 199.0V213.9M939.5 199.2V213.9M940.5 199.3V213.3M941.5 195.8V215.5M942.5 195.0V214.8M943.5 201.7V212.7M944.5 202.8V210.6M945.5 205.5V208.8M952.5 201.4V212.6M953.5 199.7V216.4M954.5 194.3V220.9M955.5 192.1V218.8M956.5 198.8V215.1M957.5 199.8V214.2M958.5 196.9V215.0M959.5 200.5V217.0M960.5 200.5V214.8M961.5 201.5V213.9M962.5 202.6V212.2M963.5 200.1V212.1M964.5 198.8V213.5M965.5 199.5V212.7M966.5 201.2V212.7M967.5 199.2V215.5M968.5 198.8V214.1M969.5 201.1V214.9M970.5 200.0V214.9M971.5 199.6V214.3M972.5 200.9V212.9M973.5 201.2V213.8M974.5 201.1V214.8M975.5 202.2V213.6M976.5 202.5V211.3M977.5 201.5V211.1M978.5 202.8V211.3M979.5 203.6V210.3M980.5 205.7V208.7M985.5 200.8V213.9M986.5 197.1V214.1M987.5 198.5V215.2M988.5 196.7V216.3M989.5 199.3V215.6M990.5 199.9V215.9M991.5 199.8V214.4M992.5 198.8V215.3M993.5 200.9V214.2M994.5 201.8V213.2M995.5 202.8V213.5M996.5 201.1V212.6M997.5 196.7V216.3M998.5 197.6V217.4M999.5 201.0V214.2M1000.5 201.4V214.3M1001.5 199.0V213.4M1002.5 201.1V214.6M1003.5 199.9V213.3M1004.5 201.0V214.8M1005.5 201.0V212.9M1006.5 199.7V215.7M1007.5 199.4V215.7M1008.5 201.0V213.8M1009.5 200.0V214.9M1010.5 200.2V214.3M1011.5 201.6V212.9M1012.5 202.4V211.9M1013.5 201.7V211.6M1014.5 201.6V213.3M1015.5 203.3V212.7M1016.5 203.0V210.3M1017.5 203.8V210.5M1018.5 205.6V208.3M1019.5 201.4V211.5M1020.5 198.9V214.6M1021.5 199.6V216.2M1022.5 197.5V214.7M1023.5 198.0V214.0M1024.5 200.3V213.4M1025.5 203.1V211.3M1026.5 205.3V208.4M1027.5 196.6V214.3M1028.5 195.3V214.8M1029.5 196.3V217.0M1030.5 195.8V217.4M1031.5 202.9V210.9M1032.5 201.5V212.3M1033.5 201.2V212.0M1034.5 201.7V211.9M1035.5 203.0V211.6M1036.5 204.7V209.1M1039.5 200.0V213.0M1040.5 199.4V214.0M1041.5 201.4V212.7M1042.5 204.2V209.4M1043.5 203.2V210.3M1044.5 204.0V210.6M1045.5 202.8V209.7M1046.5 203.3V210.5M1047.5 203.3V210.3M1048.5 204.0V210.5M1049.5 204.3V209.2M1050.5 205.0V208.8M1084.5 200.7V213.7M1085.5 200.8V213.3M1086.5 200.3V215.3M1087.5 198.2V213.4M1088.5 199.5V215.5M1089.5 198.8V214.5M1090.5 198.3V215.7M1091.5 200.7V215.8M1092.5 200.9V213.8M1093.5 200.7V212.0M1094.5 202.6V212.4M1095.5 202.8V211.4M1096.5 205.6V208.7M1100.5 200.2V213.0M1101.5 198.3V212.7M1102.5 200.1V212.6M1103.5 199.5V213.8M1104.5 199.3V212.5M1105.5 200.1V214.2M1106.5 197.7V212.5M1107.5 198.7V215.0M1108.5 199.2V213.7M1109.5 197.7V212.2M1110.5 198.4V213.7M1111.5 199.7V211.9M1112.5 201.2V212.6M1113.5 202.9V210.2M1114.5 202.6V211.0M1115.5 205.4V208.2M1116.5 201.8V213.2M1117.5 200.0V214.6M1118.5 201.3V213.3M1119.5 199.8V215.0M1120.5 201.1V212.9M1121.5 200.5V214.0M1122.5 200.5V213.2M1123.5 201.2V214.7M1124.5 198.7V214.7M1125.5 199.3V212.7M1126.5 200.9V212.7M1127.5 201.3V212.5M1128.5 202.5V212.3M1129.5 202.9V210.0M1130.5 205.5V208.3M1132.5 200.9V212.1M1133.5 198.7V213.9M1134.5 200.6V216.1M1135.5 200.2V213.9M1136.5 198.9V213.1M1137.5 198.1V215.5M1138.5 200.2V215.1M1139.5 200.2V214.8M1140.5 200.3V213.9M1141.5 199.2V214.9M1142.5 199.3V215.4M1143.5 201.0V212.8M1144.5 202.0V213.0M1145.5 202.4V211.0M1146.5 203.5V210.7M1147.5 205.0V208.6M1149.5 203.2V211.1M1150.5 202.4V211.8M1151.5 202.7V213.1M1152.5 203.2V212.4M1153.5 202.9V212.0M1154.5 202.8V211.7M1155.5 202.4V211.4M1156.5 203.0V211.9M1157.5 203.1V213.3M1158.5 202.5V213.1M1159.5 203.8V210.9M1160.5 204.0V211.0M1161.5 203.9V210.9M1162.5 204.4V209.1M1165.5 203.2V212.0M1166.5 201.3V212.3M1167.5 201.1V213.0M1168.5 199.8V213.3M1169.5 201.2V213.2M1170.5 199.9V213.0M1171.5 200.9V213.3M1172.5 201.4V215.9M1173.5 200.2V215.0M1174.5 201.1V215.8M1175.5 199.6V214.7M1176.5 201.7V212.5M1177.5 201.5V213.2M1178.5 201.5V213.8M1179.5 202.2V211.3M1180.5 202.6V211.5M1181.5 204.5V210.1M1182.5 205.4V208.8M1197.5 201.2V213.6M1198.5 201.8V216.0M1199.5 200.6V216.1M1200.5 199.9V215.1M1201.5 199.9V216.7M1202.5 199.1V214.7M1203.5 199.0V213.9M1204.5 200.4V214.5M1205.5 201.3V214.8M1206.5 201.4V216.9M1207.5 199.1V215.1M1208.5 201.2V214.3M1209.5 199.9V213.8M1210.5 202.1V213.6M1211.5 201.6V212.1M1212.5 202.6V212.6M1213.5 202.5V211.6M1214.5 202.8V210.6M1215.5 205.6V208.4M1231.5 200.4V213.2M1232.5 200.9V215.7M1233.5 198.4V213.8M1234.5 198.4V216.8M1235.5 199.9V216.2M1236.5 198.8V215.4M1237.5 199.8V214.4M1238.5 198.6V216.2M1239.5 198.2V213.5M1240.5 199.3V215.9M1241.5 200.3V213.4M1242.5 198.8V215.7M1243.5 200.0V213.4M1244.5 201.4V214.1M1245.5 202.7V213.1M1246.5 202.2V211.7M1247.5 202.6V211.3M1248.5 205.1V208.5M1262.5 201.2V212.5M1263.5 199.5V215.5M1264.5 197.4V216.7M1265.5 197.9V216.9M1266.5 198.3V216.0M1267.5 200.3V214.8M1268.5 199.0V213.7M1269.5 197.7V214.7M1270.5 199.8V213.6M1271.5 198.9V214.5M1272.5 197.6V215.6M1273.5 199.6V213.5M1274.5 201.4V214.6M1275.5 200.6V213.2M1276.5 201.6V212.3M1277.5 201.5V210.8M1278.5 203.4V211.6M1279.5 205.4V208.7M1295.5 200.1V213.3M1296.5 197.2V214.1M1297.5 197.3V217.1M1298.5 198.1V217.2M1299.5 198.1V216.8M1300.5 199.0V215.5M1301.5 197.3V216.7M1302.5 197.6V214.3M1303.5 197.4V217.8M1304.5 198.4V215.0M1305.5 197.0V215.1M1306.5 199.4V214.1M1307.5 198.5V216.3M1308.5 198.9V214.4M1309.5 199.6V214.3M1310.5 201.9V212.2M1311.5 201.3V212.5M1312.5 204.8V209.2" stroke="#6666dd" stroke-width="1.1" fill="none"/><rect x="117.6" y="175.5" width="3" height="1" fill="#333"/><rect x="117.6" y="206.5" width="3" height="1" fill="#333"/><rect x="117.6" y="238.1" width="3" height="1" fill="#333"/><path d="M9.4 148.8 l5.6 5.6 m0 -5.6 l-5.6 5.6" stroke="#111" stroke-width="1.3"/><path d="M76.8 149.2 h9 l-4.5 5 z" fill="#000"/><path d="M9.4 282.2 l5.6 5.6 m0 -5.6 l-5.6 5.6" stroke="#111" stroke-width="1.3"/><path d="M76.8 282.6 h9 l-4.5 5 z" fill="#000"/><path d="M7.6 265.4 h9 l-4.5 -5 z" fill="#000"/><path d="M7.6 329.8 h9 l-4.5 -5 z" fill="#000"/><rect x="15" y="190.6" width="66" height="1.2" fill="#a8a8a8"/><rect x="15" y="187.6" width="1" height="3" fill="#b0b0b0"/><rect x="20.4167" y="189" width="1" height="1.6" fill="#b0b0b0"/><rect x="25.8333" y="189" width="1" height="1.6" fill="#b0b0b0"/><rect x="31.25" y="189" width="1" height="1.6" fill="#b0b0b0"/><rect x="36.6667" y="189" width="1" height="1.6" fill="#b0b0b0"/><rect x="42.0833" y="189" width="1" height="1.6" fill="#b0b0b0"/><rect x="47.5" y="187.6" width="1" height="3" fill="#b0b0b0"/><rect x="52.9167" y="189" width="1" height="1.6" fill="#b0b0b0"/><rect x="58.3333" y="189" width="1" height="1.6" fill="#b0b0b0"/><rect x="63.75" y="189" width="1" height="1.6" fill="#b0b0b0"/><rect x="69.1667" y="189" width="1" height="1.6" fill="#b0b0b0"/><rect x="74.5833" y="189" width="1" height="1.6" fill="#b0b0b0"/><rect x="80" y="187.6" width="1" height="3" fill="#b0b0b0"/><circle cx="47" cy="191" r="4.2" fill="#5b5bf0"/><circle cx="47" cy="191" r="1.5" fill="#8b8bf6"/><rect x="15" y="217.2" width="66" height="1.2" fill="#a8a8a8"/><rect x="15" y="214.2" width="1" height="3" fill="#b0b0b0"/><rect x="20.4167" y="215.6" width="1" height="1.6" fill="#b0b0b0"/><rect x="25.8333" y="215.6" width="1" height="1.6" fill="#b0b0b0"/><rect x="31.25" y="215.6" width="1" height="1.6" fill="#b0b0b0"/><rect x="36.6667" y="215.6" width="1" height="1.6" fill="#b0b0b0"/><rect x="42.0833" y="215.6" width="1" height="1.6" fill="#b0b0b0"/><rect x="47.5" y="214.2" width="1" height="3" fill="#b0b0b0"/><rect x="52.9167" y="215.6" width="1" height="1.6" fill="#b0b0b0"/><rect x="58.3333" y="215.6" width="1" height="1.6" fill="#b0b0b0"/><rect x="63.75" y="215.6" width="1" height="1.6" fill="#b0b0b0"/><rect x="69.1667" y="215.6" width="1" height="1.6" fill="#b0b0b0"/><rect x="74.5833" y="215.6" width="1" height="1.6" fill="#b0b0b0"/><rect x="80" y="214.2" width="1" height="3" fill="#b0b0b0"/><circle cx="47" cy="217.6" r="4.2" fill="#5b5bf0"/><circle cx="47" cy="217.6" r="1.5" fill="#8b8bf6"/><rect x="14" y="181.6" width="4.4" height="1" fill="#222"/><rect x="73.6" y="181.6" width="5" height="1" fill="#222"/><rect x="75.6" y="179.6" width="1" height="5" fill="#222"/><rect x="223.1" y="277" width="1" height="58" fill="#2a2a2a"/><g transform="translate(223.6 298.2)"><path d="M-3 -7.6 H3 L6.8 0 L3 7.6 H-3 L-6.8 0 Z" fill="#c9c9f4" stroke="#35354e" stroke-width="0.9"/><rect x="-3.4" y="-3.6" width="6.8" height="7.2" rx="2.6" fill="#c4c4f6" stroke="#35354e" stroke-width="1"/><rect x="-0.5" y="-7.4" width="1" height="3.6" fill="#222"/><rect x="-0.5" y="3.8" width="1" height="3.6" fill="#222"/></g><rect x="359.9" y="277" width="1" height="58" fill="#2a2a2a"/><g transform="translate(360.4 298.2)"><path d="M-3 -7.6 H3 L6.8 0 L3 7.6 H-3 L-6.8 0 Z" fill="#c9c9f4" stroke="#35354e" stroke-width="0.9"/><rect x="-3.4" y="-3.6" width="6.8" height="7.2" rx="2.6" fill="#c4c4f6" stroke="#35354e" stroke-width="1"/><rect x="-0.5" y="-7.4" width="1" height="3.6" fill="#222"/><rect x="-0.5" y="3.8" width="1" height="3.6" fill="#222"/></g><rect x="492.1" y="277" width="1" height="58" fill="#2a2a2a"/><g transform="translate(492.6 298.2)"><path d="M-3 -7.6 H3 L6.8 0 L3 7.6 H-3 L-6.8 0 Z" fill="#c9c9f4" stroke="#35354e" stroke-width="0.9"/><rect x="-3.4" y="-3.6" width="6.8" height="7.2" rx="2.6" fill="#c4c4f6" stroke="#35354e" stroke-width="1"/><rect x="-0.5" y="-7.4" width="1" height="3.6" fill="#222"/><rect x="-0.5" y="3.8" width="1" height="3.6" fill="#222"/></g><rect x="1192.1" y="277" width="1" height="58" fill="#4a1010"/><g transform="translate(1192.6 298.2)"><path d="M-3 -7.6 H3 L6.8 0 L3 7.6 H-3 L-6.8 0 Z" fill="#c9c9f4" stroke="#35354e" stroke-width="0.9"/><rect x="-3.4" y="-3.6" width="6.8" height="7.2" rx="2.6" fill="#c4c4f6" stroke="#35354e" stroke-width="1"/><rect x="-0.5" y="-7.4" width="1" height="3.6" fill="#222"/><rect x="-0.5" y="3.8" width="1" height="3.6" fill="#222"/></g></svg>
<div class="a" style="left:231px;top:280px;width:68.6px;height:18.6px;background:#c9c9f6;border:1px solid #33334a;box-sizing:border-box;"></div>
<div class="a t" style="left:236.60px;top:279.00px;font-size:14px;line-height:20px;color:#26263a;transform:scaleX(0.9900);transform-origin:0 50%;">01 Verse</div>
<div class="a" style="left:367px;top:280px;width:101.6px;height:18.6px;background:#c9c9f6;border:1px solid #33334a;box-sizing:border-box;"></div>
<div class="a t" style="left:372.60px;top:279.00px;font-size:14px;line-height:20px;color:#26263a;transform:scaleX(0.9900);transform-origin:0 50%;">02 Pre Chorus</div>
<div class="a" style="left:499.2px;top:280px;width:60.8px;height:18.6px;background:#c9c9f6;border:1px solid #33334a;box-sizing:border-box;"></div>
<div class="a t" style="left:504.80px;top:279.00px;font-size:14px;line-height:20px;color:#26263a;transform:scaleX(0.9900);transform-origin:0 50%;">03 Chorus</div>
<div class="a" style="left:1120px;top:280px;width:47px;height:18.6px;background:#c9c9f6;border:1px solid #33334a;box-sizing:border-box;"></div>
<div class="a" style="left:1199.2px;top:280px;width:65.2px;height:18.6px;background:#c9c9f6;border:1px solid #33334a;box-sizing:border-box;"></div>
<div class="a t" style="left:1204.80px;top:279.00px;font-size:14px;line-height:20px;color:#26263a;transform:scaleX(0.9900);transform-origin:0 50%;">08 Outro</div>
<div class="a t" style="left:37.64px;top:117.60px;font-size:11.5px;line-height:16px;color:#1c1c1c;font-weight:bold;transform:scaleX(0.9600);transform-origin:50% 50%;">-15</div>
<div class="a t" style="left:119.30px;top:117.60px;font-size:11.5px;line-height:16px;color:#1c1c1c;font-weight:bold;transform:scaleX(0.9600);transform-origin:50% 50%;">0</div>
<div class="a t" style="left:192.15px;top:117.60px;font-size:11.5px;line-height:16px;color:#1c1c1c;font-weight:bold;transform:scaleX(0.9600);transform-origin:50% 50%;">15</div>
<div class="a t" style="left:268.20px;top:117.60px;font-size:11.5px;line-height:16px;color:#1c1c1c;font-weight:bold;transform:scaleX(0.9600);transform-origin:50% 50%;">30</div>
<div class="a t" style="left:344.25px;top:117.60px;font-size:11.5px;line-height:16px;color:#1c1c1c;font-weight:bold;transform:scaleX(0.9600);transform-origin:50% 50%;">45</div>
<div class="a t" style="left:415.19px;top:117.60px;font-size:11.5px;line-height:16px;color:#1c1c1c;font-weight:bold;transform:scaleX(0.9600);transform-origin:50% 50%;">1:00</div>
<div class="a t" style="left:491.24px;top:117.60px;font-size:11.5px;line-height:16px;color:#1c1c1c;font-weight:bold;transform:scaleX(0.9600);transform-origin:50% 50%;">1:15</div>
<div class="a t" style="left:567.29px;top:117.60px;font-size:11.5px;line-height:16px;color:#1c1c1c;font-weight:bold;transform:scaleX(0.9600);transform-origin:50% 50%;">1:30</div>
<div class="a t" style="left:643.34px;top:117.60px;font-size:11.5px;line-height:16px;color:#1c1c1c;font-weight:bold;transform:scaleX(0.9600);transform-origin:50% 50%;">1:45</div>
<div class="a t" style="left:719.39px;top:117.60px;font-size:11.5px;line-height:16px;color:#1c1c1c;font-weight:bold;transform:scaleX(0.9600);transform-origin:50% 50%;">2:00</div>
<div class="a t" style="left:795.44px;top:117.60px;font-size:11.5px;line-height:16px;color:#1c1c1c;font-weight:bold;transform:scaleX(0.9600);transform-origin:50% 50%;">2:15</div>
<div class="a t" style="left:871.49px;top:117.60px;font-size:11.5px;line-height:16px;color:#1c1c1c;font-weight:bold;transform:scaleX(0.9600);transform-origin:50% 50%;">2:30</div>
<div class="a t" style="left:947.54px;top:117.60px;font-size:11.5px;line-height:16px;color:#1c1c1c;font-weight:bold;transform:scaleX(0.9600);transform-origin:50% 50%;">2:45</div>
<div class="a t" style="left:1023.59px;top:117.60px;font-size:11.5px;line-height:16px;color:#1c1c1c;font-weight:bold;transform:scaleX(0.9600);transform-origin:50% 50%;">3:00</div>
<div class="a t" style="left:1099.64px;top:117.60px;font-size:11.5px;line-height:16px;color:#1c1c1c;font-weight:bold;transform:scaleX(0.9600);transform-origin:50% 50%;">3:15</div>
<div class="a t" style="left:1175.69px;top:117.60px;font-size:11.5px;line-height:16px;color:#1c1c1c;font-weight:bold;transform:scaleX(0.9600);transform-origin:50% 50%;">3:30</div>
<div class="a t" style="left:1251.74px;top:117.60px;font-size:11.5px;line-height:16px;color:#1c1c1c;font-weight:bold;transform:scaleX(0.9600);transform-origin:50% 50%;">3:45</div>
<div class="a t" style="left:1327.79px;top:117.60px;font-size:11.5px;line-height:16px;color:#1c1c1c;font-weight:bold;transform:scaleX(0.9600);transform-origin:50% 50%;">4:00</div>
<div class="a t" style="left:1403.84px;top:117.60px;font-size:11.5px;line-height:16px;color:#1c1c1c;font-weight:bold;transform:scaleX(0.9600);transform-origin:50% 50%;">4:15</div>
<div class="a t" style="left:1479.89px;top:117.60px;font-size:11.5px;line-height:16px;color:#1c1c1c;font-weight:bold;transform:scaleX(0.9600);transform-origin:50% 50%;">4:30</div>
<div class="a t" style="left:24.00px;top:143.80px;font-size:11.2px;line-height:16px;color:#222;transform:scaleX(0.8467);transform-origin:0 50%;">Neal Sawye</div>
<div class="a t" style="left:13.64px;top:160.10px;font-size:10.4px;line-height:15px;color:#222;transform:scaleX(0.9000);transform-origin:50% 50%;">Mute</div>
<div class="a t" style="left:57.19px;top:160.10px;font-size:10.4px;line-height:15px;color:#222;transform:scaleX(0.9000);transform-origin:50% 50%;">Solo</div>
<div class="a t" style="left:14.00px;top:201.50px;font-size:9px;line-height:13px;color:#222;">L</div>
<div class="a t" style="left:73.60px;top:201.50px;font-size:9px;line-height:13px;color:#222;">R</div>
<div class="a t" style="left:7.20px;top:228.30px;font-size:10.6px;line-height:15px;color:#222;transform:scaleX(0.8873);transform-origin:0 50%;">Mono, 44100Hz</div>
<div class="a t" style="left:7.20px;top:238.90px;font-size:10.6px;line-height:15px;color:#222;transform:scaleX(0.9213);transform-origin:0 50%;">32-bit float</div>
<div class="a t" style="left:32.79px;top:255.30px;font-size:10.8px;line-height:15px;color:#222;transform:scaleX(0.9500);transform-origin:50% 50%;">Select</div>
<div class="a t" style="left:32.79px;top:319.70px;font-size:10.8px;line-height:15px;color:#222;transform:scaleX(0.9500);transform-origin:50% 50%;">Select</div>
<div class="a t" style="left:23.40px;top:277.70px;font-size:10.8px;line-height:15px;color:#222;transform:scaleX(0.8968);transform-origin:0 50%;">Label Track</div>
<div class="a t" style="left:99.83px;top:142.40px;font-size:11.2px;line-height:16px;color:#222;font-weight:bold;transform:scaleX(0.9500);transform-origin:100% 50%;">1.0</div>
<div class="a t" style="left:99.83px;top:167.80px;font-size:11.2px;line-height:16px;color:#222;transform:scaleX(0.9500);transform-origin:100% 50%;">0.5</div>
<div class="a t" style="left:99.83px;top:198.80px;font-size:11.2px;line-height:16px;color:#222;font-weight:bold;transform:scaleX(0.9500);transform-origin:100% 50%;">0.0</div>
<div class="a t" style="left:96.10px;top:230.40px;font-size:11.2px;line-height:16px;color:#222;transform:scaleX(0.9500);transform-origin:100% 50%;">-0.5</div>
<div class="a t" style="left:96.10px;top:255.00px;font-size:11.2px;line-height:16px;color:#222;font-weight:bold;transform:scaleX(0.9500);transform-origin:100% 50%;">-1.0</div>
<div class="a" style="left:0px;top:835.8px;width:1536px;height:15.2px;background:#f0f0f0;"></div>
<div class="a" style="left:0px;top:835.8px;width:1536px;height:1px;background:#fbfbfb;"></div>
<div class="a" style="left:135.6px;top:837.2px;width:1400.4px;height:12.6px;background:#cdcdcd;"></div>
<svg class="a" style="left:120px;top:836px;" width="16" height="15" viewBox="120 836 16 15"><path d="M129.8 840.2 L126 843.5 L129.8 846.8" stroke="#4a4a4a" stroke-width="1.7" fill="none"/></svg>
<div class="a" style="left:0px;top:850.6px;width:1536px;height:50px;background:#f8f8fd;"></div>
<div class="a" style="left:0px;top:850.9px;width:1536px;height:1px;background:#cacace;"></div>
<div class="a" style="left:0px;top:900.2px;width:1536px;height:1.5px;background:#cbcbcf;"></div>
<div class="a" style="left:9px;top:851.6px;width:1px;height:49px;background:#d8d8dc;"></div>
<svg class="a" style="left:0px;top:852px;" width="12" height="50" viewBox="0 852 12 50"><rect x="3" y="855" width="4.6" height="1" fill="#c9c9cf"/><rect x="3" y="858.5" width="4.6" height="1" fill="#c9c9cf"/><rect x="3" y="862" width="4.6" height="1" fill="#c9c9cf"/><rect x="3" y="865.5" width="4.6" height="1" fill="#c9c9cf"/><rect x="3" y="869" width="4.6" height="1" fill="#c9c9cf"/><rect x="3" y="872.5" width="4.6" height="1" fill="#c9c9cf"/><rect x="3" y="876" width="4.6" height="1" fill="#c9c9cf"/><rect x="3" y="879.5" width="4.6" height="1" fill="#c9c9cf"/><rect x="3" y="883" width="4.6" height="1" fill="#c9c9cf"/><rect x="3" y="886.5" width="4.6" height="1" fill="#c9c9cf"/><rect x="3" y="890" width="4.6" height="1" fill="#c9c9cf"/><rect x="3" y="893.5" width="4.6" height="1" fill="#c9c9cf"/><rect x="3" y="897" width="4.6" height="1" fill="#c9c9cf"/></svg>
<div class="a" style="left:102px;top:859.8px;width:1px;height:12.4px;background:#9a9a9a;"></div>
<div class="a" style="left:102px;top:881px;width:1px;height:13.6px;background:#9a9a9a;"></div>
<div class="a" style="left:178.4px;top:859.8px;width:1px;height:12.4px;background:#9a9a9a;"></div>
<div class="a" style="left:178.4px;top:881px;width:1px;height:13.6px;background:#9a9a9a;"></div>
<div class="a" style="left:321px;top:859.8px;width:1px;height:12.4px;background:#9a9a9a;"></div>
<div class="a" style="left:321px;top:881px;width:1px;height:13.6px;background:#9a9a9a;"></div>
<div class="a t" style="left:14.80px;top:858.80px;font-size:11.6px;line-height:16px;color:#1e1e1e;transform:scaleX(0.9263);transform-origin:0 50%;">Project Rate (Hz)</div>
<div class="a t" style="left:108.00px;top:858.80px;font-size:11.6px;line-height:16px;color:#1e1e1e;transform:scaleX(0.9395);transform-origin:0 50%;">Snap-To</div>
<div class="a t" style="left:184.00px;top:858.80px;font-size:11.6px;line-height:16px;color:#1e1e1e;transform:scaleX(0.9493);transform-origin:0 50%;">Audio Position</div>
<div class="a" style="left:15px;top:877.8px;width:70.8px;height:20px;background:#ffffff;border:1px solid #4a4a4a;box-sizing:border-box;"></div>
<div class="a t" style="left:20.60px;top:879.60px;font-size:11.6px;line-height:16px;color:#1e1e1e;transform:scaleX(0.9424);transform-origin:0 50%;">44100</div>
<div class="a" style="left:108.2px;top:877.8px;width:64.4px;height:20px;background:#e1e1e1;border:1px solid #adadad;box-sizing:border-box;"></div>
<div class="a t" style="left:111.80px;top:880.00px;font-size:11.6px;line-height:16px;color:#1e1e1e;transform:scaleX(0.9697);transform-origin:0 50%;">Off</div>
<div class="a" style="left:326.8px;top:856.3px;width:265.8px;height:20.2px;background:#e1e1e1;border:1px solid #adadad;box-sizing:border-box;"></div>
<div class="a t" style="left:330.40px;top:858.40px;font-size:11.6px;line-height:16px;color:#1e1e1e;transform:scaleX(0.9349);transform-origin:0 50%;">Start and End of Selection</div>
<svg class="a" style="left:0px;top:852px;" width="600" height="50" viewBox="0 852 600 50"><path d="M74.2 886.4 l3.6 3.4 l3.6 -3.4" stroke="#444" stroke-width="1" fill="none"/><path d="M161 886.6 l3.6 3.4 l3.6 -3.4" stroke="#444" stroke-width="1" fill="none"/><path d="M580.8 865 l3.6 3.4 l3.6 -3.4" stroke="#444" stroke-width="1" fill="none"/></svg>
<div class="a" style="left:184.6px;top:878px;width:129.6px;height:17.4px;background:#c7cadb;"></div>
<div class="a" style="left:205.4px;top:879px;width:10.9px;height:16.4px;background:#b3b8cb;"></div>
<div class="a" style="left:234px;top:879px;width:15.1px;height:16.4px;background:#b3b8cb;"></div>
<div class="a" style="left:267.5px;top:879px;width:2.4px;height:16.4px;background:#b3b8cb;"></div>
<div class="a" style="left:296.5px;top:879px;width:9.4px;height:16.4px;background:#b3b8cb;"></div>
<div class="a" style="left:306.9px;top:879px;width:6.5px;height:16.4px;background:#b3b8cb;"></div>
<div class="a" style="left:184.6px;top:878px;width:129.6px;height:1.1px;background:#6e6e78;"></div>
<div class="a" style="left:184.6px;top:878px;width:1.1px;height:17.4px;background:#77777f;"></div>
<div class="a" style="left:184.6px;top:894.6px;width:129.6px;height:0.8px;background:#a9adbf;"></div>
<div class="a t" style="left:187.57px;top:879.40px;font-size:11.6px;line-height:16px;color:#2c2cd2;transform:scaleX(0.9300);transform-origin:50% 50%;">0</div>
<div class="a t" style="left:196.72px;top:879.40px;font-size:11.6px;line-height:16px;color:#2c2cd2;transform:scaleX(0.9300);transform-origin:50% 50%;">0</div>
<div class="a t" style="left:217.27px;top:879.40px;font-size:11.6px;line-height:16px;color:#2c2cd2;transform:scaleX(0.9300);transform-origin:50% 50%;">0</div>
<div class="a t" style="left:226.57px;top:879.40px;font-size:11.6px;line-height:16px;color:#2c2cd2;transform:scaleX(0.9300);transform-origin:50% 50%;">3</div>
<div class="a t" style="left:250.57px;top:879.40px;font-size:11.6px;line-height:16px;color:#2c2cd2;transform:scaleX(0.9300);transform-origin:50% 50%;">3</div>
<div class="a t" style="left:259.47px;top:879.40px;font-size:11.6px;line-height:16px;color:#2c2cd2;transform:scaleX(0.9300);transform-origin:50% 50%;">1</div>
<div class="a t" style="left:269.87px;top:879.40px;font-size:11.6px;line-height:16px;color:#2c2cd2;transform:scaleX(0.9300);transform-origin:50% 50%;">0</div>
<div class="a t" style="left:279.22px;top:879.40px;font-size:11.6px;line-height:16px;color:#2c2cd2;transform:scaleX(0.9300);transform-origin:50% 50%;">7</div>
<div class="a t" style="left:288.07px;top:879.40px;font-size:11.6px;line-height:16px;color:#2c2cd2;transform:scaleX(0.9300);transform-origin:50% 50%;">0</div>
<div class="a t" style="left:207.37px;top:879.40px;font-size:11.6px;line-height:16px;color:#2c2cd2;transform:scaleX(0.9300);transform-origin:50% 50%;">h</div>
<div class="a t" style="left:236.77px;top:879.40px;font-size:11.6px;line-height:16px;color:#2c2cd2;transform:scaleX(0.9300);transform-origin:50% 50%;">m</div>
<div class="a t" style="left:266.89px;top:879.40px;font-size:11.6px;line-height:16px;color:#2c2cd2;transform:scaleX(0.9300);transform-origin:50% 50%;">.</div>
<div class="a t" style="left:298.80px;top:879.40px;font-size:11.6px;line-height:16px;color:#2c2cd2;transform:scaleX(0.9300);transform-origin:50% 50%;">s</div>
<svg class="a" style="left:305.6px;top:882px;" width="9" height="10" viewBox="305.6 882 9 10"><path d="M306.9 885.2 h6.4 l-3.2 4.2 z" fill="#111"/></svg>
<div class="a" style="left:327.2px;top:878px;width:129.6px;height:17.4px;background:#c7cadb;"></div>
<div class="a" style="left:348px;top:879px;width:10.9px;height:16.4px;background:#b3b8cb;"></div>
<div class="a" style="left:376.6px;top:879px;width:15.1px;height:16.4px;background:#b3b8cb;"></div>
<div class="a" style="left:410.1px;top:879px;width:2.4px;height:16.4px;background:#b3b8cb;"></div>
<div class="a" style="left:439.1px;top:879px;width:9.4px;height:16.4px;background:#b3b8cb;"></div>
<div class="a" style="left:449.5px;top:879px;width:6.5px;height:16.4px;background:#b3b8cb;"></div>
<div class="a" style="left:327.2px;top:878px;width:129.6px;height:1.1px;background:#6e6e78;"></div>
<div class="a" style="left:327.2px;top:878px;width:1.1px;height:17.4px;background:#77777f;"></div>
<div class="a" style="left:327.2px;top:894.6px;width:129.6px;height:0.8px;background:#a9adbf;"></div>
<div class="a t" style="left:330.17px;top:879.40px;font-size:11.6px;line-height:16px;color:#2c2cd2;transform:scaleX(0.9300);transform-origin:50% 50%;">0</div>
<div class="a t" style="left:339.32px;top:879.40px;font-size:11.6px;line-height:16px;color:#2c2cd2;transform:scaleX(0.9300);transform-origin:50% 50%;">0</div>
<div class="a t" style="left:359.87px;top:879.40px;font-size:11.6px;line-height:16px;color:#2c2cd2;transform:scaleX(0.9300);transform-origin:50% 50%;">0</div>
<div class="a t" style="left:369.17px;top:879.40px;font-size:11.6px;line-height:16px;color:#2c2cd2;transform:scaleX(0.9300);transform-origin:50% 50%;">3</div>
<div class="a t" style="left:393.17px;top:879.40px;font-size:11.6px;line-height:16px;color:#2c2cd2;transform:scaleX(0.9300);transform-origin:50% 50%;">3</div>
<div class="a t" style="left:402.07px;top:879.40px;font-size:11.6px;line-height:16px;color:#2c2cd2;transform:scaleX(0.9300);transform-origin:50% 50%;">1</div>
<div class="a t" style="left:412.47px;top:879.40px;font-size:11.6px;line-height:16px;color:#2c2cd2;transform:scaleX(0.9300);transform-origin:50% 50%;">0</div>
<div class="a t" style="left:421.82px;top:879.40px;font-size:11.6px;line-height:16px;color:#2c2cd2;transform:scaleX(0.9300);transform-origin:50% 50%;">7</div>
<div class="a t" style="left:430.67px;top:879.40px;font-size:11.6px;line-height:16px;color:#2c2cd2;transform:scaleX(0.9300);transform-origin:50% 50%;">0</div>
<div class="a t" style="left:349.97px;top:879.40px;font-size:11.6px;line-height:16px;color:#2c2cd2;transform:scaleX(0.9300);transform-origin:50% 50%;">h</div>
<div class="a t" style="left:379.37px;top:879.40px;font-size:11.6px;line-height:16px;color:#2c2cd2;transform:scaleX(0.9300);transform-origin:50% 50%;">m</div>
<div class="a t" style="left:409.49px;top:879.40px;font-size:11.6px;line-height:16px;color:#2c2cd2;transform:scaleX(0.9300);transform-origin:50% 50%;">.</div>
<div class="a t" style="left:441.40px;top:879.40px;font-size:11.6px;line-height:16px;color:#2c2cd2;transform:scaleX(0.9300);transform-origin:50% 50%;">s</div>
<svg class="a" style="left:448.2px;top:882px;" width="9" height="10" viewBox="448.2 882 9 10"><path d="M449.5 885.2 h6.4 l-3.2 4.2 z" fill="#111"/></svg>
<div class="a" style="left:463.2px;top:878px;width:129.6px;height:17.4px;background:#c7cadb;"></div>
<div class="a" style="left:484px;top:879px;width:10.9px;height:16.4px;background:#b3b8cb;"></div>
<div class="a" style="left:512.6px;top:879px;width:15.1px;height:16.4px;background:#b3b8cb;"></div>
<div class="a" style="left:546.1px;top:879px;width:2.4px;height:16.4px;background:#b3b8cb;"></div>
<div class="a" style="left:575.1px;top:879px;width:9.4px;height:16.4px;background:#b3b8cb;"></div>
<div class="a" style="left:585.5px;top:879px;width:6.5px;height:16.4px;background:#b3b8cb;"></div>
<div class="a" style="left:463.2px;top:878px;width:129.6px;height:1.1px;background:#6e6e78;"></div>
<div class="a" style="left:463.2px;top:878px;width:1.1px;height:17.4px;background:#77777f;"></div>
<div class="a" style="left:463.2px;top:894.6px;width:129.6px;height:0.8px;background:#a9adbf;"></div>
<div class="a t" style="left:466.17px;top:879.40px;font-size:11.6px;line-height:16px;color:#2c2cd2;transform:scaleX(0.9300);transform-origin:50% 50%;">0</div>
<div class="a t" style="left:475.32px;top:879.40px;font-size:11.6px;line-height:16px;color:#2c2cd2;transform:scaleX(0.9300);transform-origin:50% 50%;">0</div>
<div class="a t" style="left:495.87px;top:879.40px;font-size:11.6px;line-height:16px;color:#2c2cd2;transform:scaleX(0.9300);transform-origin:50% 50%;">0</div>
<div class="a t" style="left:505.17px;top:879.40px;font-size:11.6px;line-height:16px;color:#2c2cd2;transform:scaleX(0.9300);transform-origin:50% 50%;">3</div>
<div class="a t" style="left:529.17px;top:879.40px;font-size:11.6px;line-height:16px;color:#2c2cd2;transform:scaleX(0.9300);transform-origin:50% 50%;">3</div>
<div class="a t" style="left:538.07px;top:879.40px;font-size:11.6px;line-height:16px;color:#2c2cd2;transform:scaleX(0.9300);transform-origin:50% 50%;">1</div>
<div class="a t" style="left:548.47px;top:879.40px;font-size:11.6px;line-height:16px;color:#2c2cd2;transform:scaleX(0.9300);transform-origin:50% 50%;">0</div>
<div class="a t" style="left:557.82px;top:879.40px;font-size:11.6px;line-height:16px;color:#2c2cd2;transform:scaleX(0.9300);transform-origin:50% 50%;">7</div>
<div class="a t" style="left:566.67px;top:879.40px;font-size:11.6px;line-height:16px;color:#2c2cd2;transform:scaleX(0.9300);transform-origin:50% 50%;">0</div>
<div class="a t" style="left:485.97px;top:879.40px;font-size:11.6px;line-height:16px;color:#2c2cd2;transform:scaleX(0.9300);transform-origin:50% 50%;">h</div>
<div class="a t" style="left:515.37px;top:879.40px;font-size:11.6px;line-height:16px;color:#2c2cd2;transform:scaleX(0.9300);transform-origin:50% 50%;">m</div>
<div class="a t" style="left:545.49px;top:879.40px;font-size:11.6px;line-height:16px;color:#2c2cd2;transform:scaleX(0.9300);transform-origin:50% 50%;">.</div>
<div class="a t" style="left:577.40px;top:879.40px;font-size:11.6px;line-height:16px;color:#2c2cd2;transform:scaleX(0.9300);transform-origin:50% 50%;">s</div>
<svg class="a" style="left:584.2px;top:882px;" width="9" height="10" viewBox="584.2 882 9 10"><path d="M585.5 885.2 h6.4 l-3.2 4.2 z" fill="#111"/></svg>
<div class="a" style="left:0px;top:901.7px;width:1536px;height:20.3px;background:#f0f0f0;"></div>
<div class="a" style="left:8px;top:904.6px;width:1px;height:16px;background:#dcdcdc;"></div>
<div class="a" style="left:159.8px;top:904.6px;width:1px;height:16px;background:#d0d0d0;"></div>
<div class="a t" style="left:12.60px;top:905.00px;font-size:11.4px;line-height:16px;color:#1e1e1e;transform:scaleX(0.9115);transform-origin:0 50%;">Stopped.</div>
<div class="a t" style="left:164.20px;top:905.00px;font-size:11.4px;line-height:16px;color:#1e1e1e;transform:scaleX(0.9201);transform-origin:0 50%;">Click to edit label text (Esc to cancel)</div>
<div class="a" style="left:537px;top:260.3px;width:627.3px;height:395.6px;background:#f0f0f0;box-shadow:0 0 0 0.5px rgba(70,70,80,.5), 0 3px 12px rgba(0,0,0,.35);"></div>
<div class="a" style="left:536.9px;top:260.3px;width:627.4px;height:25.2px;background:#ffffff;"></div>
<div class="a t" style="left:544.40px;top:264.80px;font-size:11.2px;line-height:16px;color:#a0a0a0;transform:scaleX(0.9882);transform-origin:0 50%;">Export Multiple</div>
<svg class="a" style="left:1143px;top:265px;" width="14" height="14" viewBox="1143 265 14 14"><path d="M1145 267.2 l9.6 9.6 m0 -9.6 l-9.6 9.6" stroke="#a8a8a8" stroke-width="1" fill="none"/></svg>
<div class="a" style="left:542.4px;top:298px;width:616.2px;height:185.6px;border:1px solid #dcdcdc;box-sizing:border-box;"></div>
<div class="a" style="left:547.4px;top:292px;width:69.8px;height:12px;background:#f0f0f0;"></div>
<div class="a t" style="left:549.40px;top:290.00px;font-size:11.2px;line-height:16px;color:#111;transform:scaleX(0.9273);transform-origin:0 50%;">Export files to:</div>
<div class="a t" style="left:550.20px;top:313.80px;font-size:11.2px;line-height:16px;color:#111;transform:scaleX(0.9352);transform-origin:0 50%;">Folder:</div>
<div class="a" style="left:599.4px;top:310.8px;width:480px;height:21.6px;background:#fff;border:1px solid #7a7a7a;box-sizing:border-box;"></div>
<div class="a t" style="left:604.40px;top:313.80px;font-size:11.2px;line-height:16px;color:#111;transform:scaleX(1.0190);transform-origin:0 50%;">C:\Users\Neal\Music</div>
<div class="a t" style="left:550.20px;top:344.00px;font-size:11.2px;line-height:16px;color:#111;transform:scaleX(0.9590);transform-origin:0 50%;">Format:</div>
<div class="a" style="left:599.4px;top:343.4px;width:480px;height:18.8px;background:#e1e1e1;border:1px solid #adadad;box-sizing:border-box;"></div>
<div class="a t" style="left:604.40px;top:344.60px;font-size:11.2px;line-height:16px;color:#111;transform:scaleX(0.9772);transform-origin:0 50%;">WAV signed 16-bit PCM</div>
<div class="a t" style="left:550.20px;top:415.80px;font-size:11.2px;line-height:16px;color:#111;transform:scaleX(1.0213);transform-origin:0 50%;">Options:</div>
<div class="a" style="left:599.4px;top:371px;width:480px;height:103px;border:1px solid #dcdcdc;box-sizing:border-box;"></div>
<div class="a" style="left:1086px;top:311.4px;width:63.6px;height:20.6px;background:#e1e1e1;border:1px solid #adadad;box-sizing:border-box;"></div>
<div class="a t" style="left:1096.80px;top:313.70px;font-size:11.2px;line-height:16px;color:#111;transform:scaleX(0.9043);transform-origin:0 50%;">Create</div>
<div class="a" style="left:542.4px;top:500.4px;width:616.2px;height:86.6px;border:1px solid #dcdcdc;box-sizing:border-box;"></div>
<div class="a" style="left:547.4px;top:494.4px;width:88.9px;height:12px;background:#f0f0f0;"></div>
<div class="a t" style="left:549.40px;top:492.40px;font-size:11.2px;line-height:16px;color:#111;transform:scaleX(0.8741);transform-origin:0 50%;">Split files based on:</div>
<div class="a" style="left:547px;top:510.6px;width:11.6px;height:11.6px;background:#fff;border:1px solid #333;box-sizing:border-box;border-radius:5.8px;"></div>
<div class="a" style="left:547px;top:526px;width:11.6px;height:11.6px;background:#fff;border:1px solid #333;box-sizing:border-box;border-radius:5.8px;"></div>
<div class="a" style="left:549.9px;top:528.9px;width:5.8px;height:5.8px;background:#222;border-radius:2.9px;"></div>
<div class="a t" style="left:561.00px;top:508.80px;font-size:11.2px;line-height:16px;color:#111;transform:scaleX(0.8631);transform-origin:0 50%;">Tracks</div>
<div class="a t" style="left:561.00px;top:524.20px;font-size:11.2px;line-height:16px;color:#111;transform:scaleX(0.8908);transform-origin:0 50%;">Labels</div>
<div class="a" style="left:562.2px;top:542.8px;width:11.4px;height:11.4px;background:#fff;border:1px solid #333;box-sizing:border-box;"></div>
<div class="a t" style="left:576.00px;top:540.80px;font-size:11.2px;line-height:16px;color:#111;transform:scaleX(1.0707);transform-origin:0 50%;">Include audio before first label</div>
<div class="a t" style="left:562.00px;top:560.20px;font-size:11.2px;line-height:16px;color:#a8a8a8;transform:scaleX(0.9532);transform-origin:0 50%;">First file name:</div>
<div class="a" style="left:1000px;top:561.4px;width:152.6px;height:19.6px;background:#f4f4f4;border:1px solid #d9d9d9;box-sizing:border-box;"></div>
<div class="a t" style="left:1097.40px;top:563.20px;font-size:11.2px;line-height:16px;color:#a0a0a0;transform:scaleX(0.8533);transform-origin:0 50%;">als)</div>
<div class="a" style="left:541.8px;top:598.8px;width:11.4px;height:11.4px;background:#fff;border:1px solid #333;box-sizing:border-box;"></div>
<div class="a t" style="left:555.80px;top:597.00px;font-size:11.2px;line-height:16px;color:#111;transform:scaleX(0.9694);transform-origin:0 50%;">Overwrite existing files</div>
<div class="a" style="left:958.6px;top:623.6px;width:77px;height:21px;background:#e1e1e1;border:1px solid #0078d7;box-sizing:border-box;"></div>
<div class="a" style="left:958.6px;top:642.6px;width:77px;height:2px;background:#0078d7;"></div>
<div class="a" style="left:1043px;top:623.6px;width:77px;height:20.6px;background:#e1e1e1;border:1px solid #adadad;box-sizing:border-box;"></div>
<div class="a t" style="left:1064.07px;top:625.90px;font-size:11.2px;line-height:16px;color:#111;transform:scaleX(0.9638);transform-origin:50% 50%;">Cancel</div>
<div class="a" style="left:1129.6px;top:622.4px;width:23.6px;height:23px;background:#e1e1e1;border:1px solid #adadad;box-sizing:border-box;"></div>
<div class="a" style="left:1132.2px;top:624.7px;width:18.4px;height:18.4px;background:#5a9bff;border-radius:9.2px;"></div>
<div class="a t" style="left:1136.70px;top:623.50px;font-size:15.4px;line-height:22px;color:#fff;font-weight:bold;transform:scaleX(0.9000);transform-origin:50% 50%;">?</div>
<div class="a" style="left:615.9px;top:272.8px;width:470.2px;height:369.3px;background:#f0f0f0;box-shadow:0 0 0 0.7px rgba(120,120,120,.6), 0 0.5px 3.5px 1.6px rgba(0,0,0,.42);"></div>
<div class="a" style="left:602.7px;top:260.25px;width:494.6px;height:394.05px;border:9.1px solid #ffc81e;box-sizing:border-box;"></div>
<div class="a" style="left:615.9px;top:272.8px;width:470.2px;height:26.6px;background:#ffffff;"></div>
<div class="a t" style="left:623.00px;top:278.20px;font-size:11.2px;line-height:16px;color:#111;transform:scaleX(0.9061);transform-origin:0 50%;">Edit Metadata Tags</div>
<svg class="a" style="left:1065px;top:278px;" width="15" height="15" viewBox="1065 278 15 15"><path d="M1067.6 280.6 l9.4 9.4 m0 -9.4 l-9.4 9.4" stroke="#222" stroke-width="1.1" fill="none"/></svg>
<div class="a t" style="left:620.40px;top:303.00px;font-size:11.2px;line-height:16px;color:#111;transform:scaleX(0.9144);transform-origin:0 50%;">Use arrow keys (or ENTER key after editing) to navigate fields.</div>
<div class="a" style="left:621px;top:328px;width:458.6px;height:151.6px;background:#ffffff;"></div>
<div class="a" style="left:621px;top:328px;width:458.6px;height:1.2px;background:#6a6a6a;"></div>
<div class="a" style="left:621px;top:328px;width:1.2px;height:151.6px;background:#8a8a8a;"></div>
<div class="a" style="left:622.2px;top:329.2px;width:457.4px;height:16.2px;background:#f0f0f0;"></div>
<div class="a" style="left:622.2px;top:329.2px;width:432.8px;height:16.2px;background:#f3f3f3;"></div>
<div class="a" style="left:622px;top:344.9px;width:433.4px;height:1px;background:#d4d4d4;"></div>
<div class="a" style="left:622px;top:361.76px;width:433.4px;height:1px;background:#d4d4d4;"></div>
<div class="a" style="left:622px;top:378.62px;width:433.4px;height:1px;background:#d4d4d4;"></div>
<div class="a" style="left:622px;top:395.48px;width:433.4px;height:1px;background:#d4d4d4;"></div>
<div class="a" style="left:622px;top:412.34px;width:433.4px;height:1px;background:#d4d4d4;"></div>
<div class="a" style="left:622px;top:429.2px;width:433.4px;height:1px;background:#d4d4d4;"></div>
<div class="a" style="left:622px;top:446.06px;width:433.4px;height:1px;background:#d4d4d4;"></div>
<div class="a" style="left:622px;top:462.92px;width:433.4px;height:1px;background:#d4d4d4;"></div>
<div class="a" style="left:622px;top:345px;width:433.4px;height:1px;background:#a0a0a0;"></div>
<div class="a" style="left:715px;top:329px;width:1px;height:150.6px;background:#d4d4d4;"></div>
<div class="a" style="left:1055px;top:329px;width:1px;height:150.6px;background:#d4d4d4;"></div>
<div class="a" style="left:715px;top:329px;width:1px;height:16.4px;background:#a0a0a0;"></div>
<div class="a" style="left:1055px;top:329px;width:1px;height:16.4px;background:#a0a0a0;"></div>
<div class="a t" style="left:659.44px;top:329.80px;font-size:11.2px;line-height:16px;color:#111;font-weight:bold;transform:scaleX(0.9300);transform-origin:50% 50%;">Tag</div>
<div class="a t" style="left:870.46px;top:329.80px;font-size:11.2px;line-height:16px;color:#111;font-weight:bold;transform:scaleX(0.9300);transform-origin:50% 50%;">Value</div>
<div class="a t" style="left:623.80px;top:345.70px;font-size:11.2px;line-height:16px;color:#111;transform:scaleX(0.9710);transform-origin:0 50%;">Artist Name</div>
<div class="a t" style="left:718.00px;top:345.70px;font-size:11.2px;line-height:16px;color:#111;transform:scaleX(0.9040);transform-origin:0 50%;">Neal Sawyer</div>
<div class="a t" style="left:623.80px;top:362.56px;font-size:11.2px;line-height:16px;color:#111;transform:scaleX(0.9183);transform-origin:0 50%;">Track Title</div>
<div class="a t" style="left:718.00px;top:362.56px;font-size:11.2px;line-height:16px;color:#111;transform:scaleX(0.8700);transform-origin:0 50%;">01 Verse</div>
<div class="a t" style="left:623.80px;top:379.42px;font-size:11.2px;line-height:16px;color:#111;transform:scaleX(0.9711);transform-origin:0 50%;">Album Title</div>
<div class="a t" style="left:718.00px;top:379.42px;font-size:11.2px;line-height:16px;color:#111;transform:scaleX(0.9501);transform-origin:0 50%;">Ballads of the Mortal</div>
<div class="a t" style="left:623.80px;top:396.28px;font-size:11.2px;line-height:16px;color:#111;transform:scaleX(0.9500);transform-origin:0 50%;">Track Number</div>
<div class="a t" style="left:718.00px;top:396.28px;font-size:11.2px;line-height:16px;color:#111;transform:scaleX(0.8990);transform-origin:0 50%;">1</div>
<div class="a t" style="left:623.80px;top:413.14px;font-size:11.2px;line-height:16px;color:#111;transform:scaleX(0.8707);transform-origin:0 50%;">Year</div>
<div class="a t" style="left:623.80px;top:430.00px;font-size:11.2px;line-height:16px;color:#111;transform:scaleX(0.8867);transform-origin:0 50%;">Genre</div>
<div class="a t" style="left:718.00px;top:430.00px;font-size:11.2px;line-height:16px;color:#111;transform:scaleX(0.9714);transform-origin:0 50%;">Alternative</div>
<div class="a t" style="left:623.80px;top:446.86px;font-size:11.2px;line-height:16px;color:#111;transform:scaleX(0.9714);transform-origin:0 50%;">Comments</div>
<div class="a t" style="left:718.00px;top:446.86px;font-size:11.2px;line-height:16px;color:#111;transform:scaleX(0.9499);transform-origin:0 50%;">Microphone Basics - How To Split Audio In Audacity</div>
<div class="a" style="left:715.8px;top:446.76px;width:339.6px;height:16.6px;border:1.6px solid #000;box-sizing:border-box;"></div>
<div class="a" style="left:726px;top:492px;width:75.8px;height:21px;background:#e1e1e1;border:1px solid #adadad;box-sizing:border-box;"></div>
<div class="a t" style="left:753.94px;top:494.50px;font-size:11.2px;line-height:16px;color:#111;transform:scaleX(0.9835);transform-origin:50% 50%;">Add</div>
<div class="a" style="left:813px;top:492px;width:75.8px;height:21px;background:#e1e1e1;border:1px solid #adadad;box-sizing:border-box;"></div>
<div class="a t" style="left:830.05px;top:494.50px;font-size:11.2px;line-height:16px;color:#111;transform:scaleX(0.9256);transform-origin:50% 50%;">Remove</div>
<div class="a" style="left:899.8px;top:492px;width:75.8px;height:21px;background:#e1e1e1;border:1px solid #adadad;box-sizing:border-box;"></div>
<div class="a t" style="left:924.32px;top:494.50px;font-size:11.2px;line-height:16px;color:#111;transform:scaleX(0.9117);transform-origin:50% 50%;">Clear</div>
<div class="a" style="left:620.8px;top:529.8px;width:182px;height:43.8px;border:1px solid #dcdcdc;box-sizing:border-box;"></div>
<div class="a" style="left:626.4px;top:523.8px;width:36.4px;height:12px;background:#f0f0f0;"></div>
<div class="a t" style="left:628.40px;top:521.80px;font-size:11.2px;line-height:16px;color:#111;transform:scaleX(0.8822);transform-origin:0 50%;">Genres</div>
<div class="a" style="left:630px;top:543.4px;width:76.4px;height:21.4px;background:#e1e1e1;border:1px solid #adadad;box-sizing:border-box;"></div>
<div class="a t" style="left:653.88px;top:546.10px;font-size:11.2px;line-height:16px;color:#111;transform:scaleX(0.8940);transform-origin:50% 50%;">Edit...</div>
<div class="a" style="left:717px;top:543.4px;width:76px;height:21.4px;background:#e1e1e1;border:1px solid #adadad;box-sizing:border-box;"></div>
<div class="a t" style="left:735.70px;top:546.10px;font-size:11.2px;line-height:16px;color:#111;transform:scaleX(0.8551);transform-origin:50% 50%;">Reset...</div>
<div class="a" style="left:812.6px;top:529.8px;width:268.2px;height:43.8px;border:1px solid #dcdcdc;box-sizing:border-box;"></div>
<div class="a" style="left:818.2px;top:523.8px;width:46.6px;height:12px;background:#f0f0f0;"></div>
<div class="a t" style="left:820.20px;top:521.80px;font-size:11.2px;line-height:16px;color:#111;transform:scaleX(0.9125);transform-origin:0 50%;">Template</div>
<div class="a" style="left:821.6px;top:543.4px;width:76.2px;height:21.4px;background:#e1e1e1;border:1px solid #adadad;box-sizing:border-box;"></div>
<div class="a t" style="left:842.57px;top:546.10px;font-size:11.2px;line-height:16px;color:#111;transform:scaleX(0.9051);transform-origin:50% 50%;">Load...</div>
<div class="a" style="left:908px;top:543.4px;width:77px;height:21.4px;background:#e1e1e1;border:1px solid #adadad;box-sizing:border-box;"></div>
<div class="a t" style="left:929.07px;top:546.10px;font-size:11.2px;line-height:16px;color:#111;transform:scaleX(0.8490);transform-origin:50% 50%;">Save...</div>
<div class="a" style="left:995px;top:543.4px;width:76.6px;height:21.4px;background:#e1e1e1;border:1px solid #adadad;box-sizing:border-box;"></div>
<div class="a t" style="left:1005.60px;top:546.10px;font-size:11.2px;line-height:16px;color:#111;transform:scaleX(0.9276);transform-origin:50% 50%;">Set Default</div>
<div class="a" style="left:620.4px;top:584.4px;width:11.4px;height:11.4px;background:#fff;border:1px solid #333;box-sizing:border-box;"></div>
<div class="a t" style="left:634.60px;top:582.40px;font-size:11.2px;line-height:16px;color:#111;transform:scaleX(0.9634);transform-origin:0 50%;">Don&#x27;t show this when exporting audio</div>
<div class="a" style="left:881.2px;top:609.4px;width:75.8px;height:20.6px;background:#e1e1e1;border:1px solid #adadad;box-sizing:border-box;"></div>
<div class="a t" style="left:911.01px;top:611.70px;font-size:11.2px;line-height:16px;color:#111;transform:scaleX(0.9022);transform-origin:50% 50%;">OK</div>
<div class="a" style="left:966px;top:609.4px;width:76px;height:20.6px;background:#e1e1e1;border:1px solid #adadad;box-sizing:border-box;"></div>
<div class="a t" style="left:986.57px;top:611.70px;font-size:11.2px;line-height:16px;color:#111;transform:scaleX(0.9293);transform-origin:50% 50%;">Cancel</div>
<div class="a" style="left:1051px;top:608px;width:24px;height:23.6px;background:#e1e1e1;border:1px solid #adadad;box-sizing:border-box;"></div>
<div class="a" style="left:1053.8px;top:610.6px;width:18.4px;height:18.4px;background:#5a9bff;border-radius:9.2px;"></div>
<div class="a t" style="left:1058.30px;top:609.40px;font-size:15.4px;line-height:22px;color:#fff;font-weight:bold;transform:scaleX(0.9000);transform-origin:50% 50%;">?</div>
<svg class="a" style="left:1074px;top:631px;" width="12" height="12" viewBox="1074 631 12 12"><g fill="#b8b8b8"><rect x="1083" y="633" width="1.6" height="1.6"/><rect x="1080" y="636" width="1.6" height="1.6"/><rect x="1083" y="636" width="1.6" height="1.6"/><rect x="1077" y="639" width="1.6" height="1.6"/><rect x="1080" y="639" width="1.6" height="1.6"/><rect x="1083" y="639" width="1.6" height="1.6"/></g></svg>
</body></html>
